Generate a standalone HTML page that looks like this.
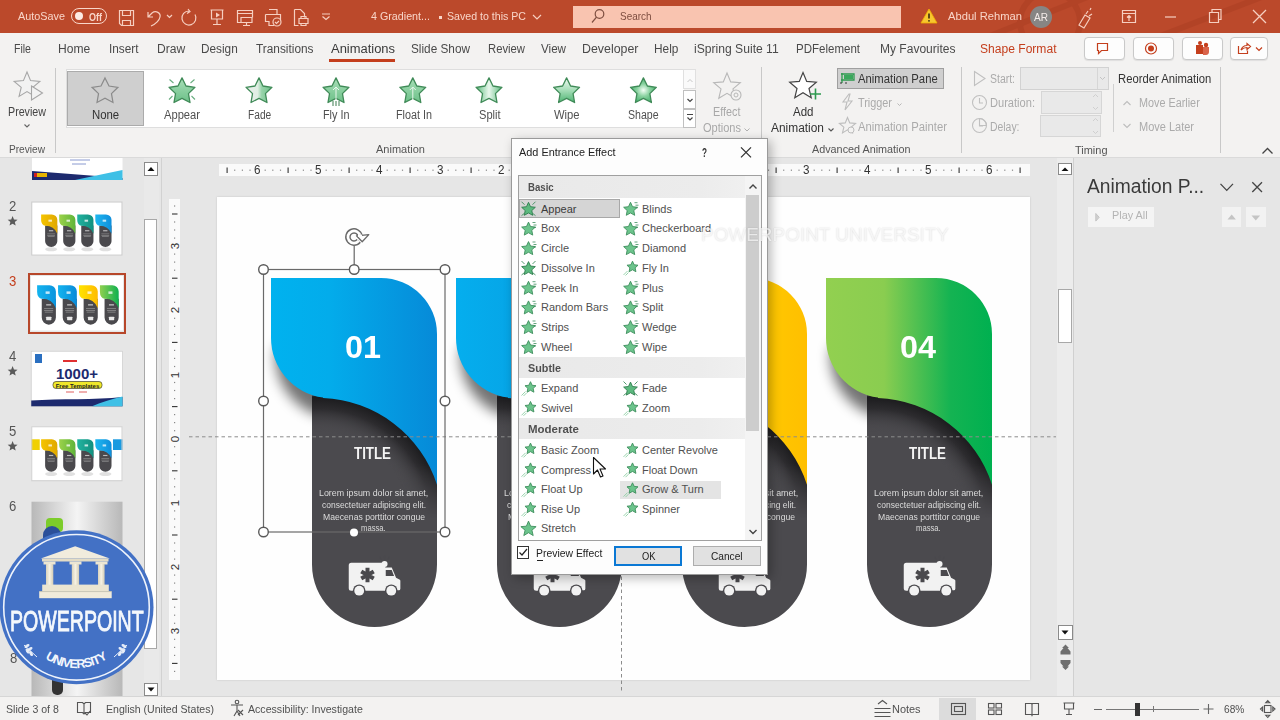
<!DOCTYPE html>
<html><head><meta charset="utf-8">
<style>
*{margin:0;padding:0;box-sizing:border-box}
html,body{width:1280px;height:720px;overflow:hidden;background:#e6e6e6;font-family:"Liberation Sans",sans-serif;color:#333;position:relative}
.a{position:absolute}
.t{position:absolute;white-space:pre;transform-origin:0 0}
svg{overflow:visible}
</style></head><body>
<div class="a" style="left:0px;top:0px;width:1280px;height:33px;background:#bb492b"></div>
<div class="a" style="left:0px;top:33px;width:1280px;height:125px;background:#f3f2f1"></div>
<div class="a" style="left:0px;top:157px;width:1280px;height:1px;background:#dadada"></div>
<div class="a" style="left:0px;top:158px;width:1280px;height:540px;background:#e6e6e6"></div>
<div class="a" style="left:0px;top:696px;width:1280px;height:24px;background:#f3f2f1;border-top:1px solid #d6d6d6"></div>
<svg class="a" style="left:0px;top:0px;overflow:hidden" width="1280" height="33" viewBox="0 0 1280 33"><g fill="none" stroke="#a83c22" stroke-width="6" opacity="0.45"><circle cx="1050" cy="22" r="30"/><path d="M980 40 L1130 -20"/><path d="M1150 40 L1280 -10"/></g></svg>
<div class="t" style="left:18.00px;top:11.22px;font-family:'Liberation Sans';font-size:11.5px;line-height:11.5px;color:#f9d6c9;font-weight:normal;transform:scaleX(0.9424);">AutoSave</div>
<div class="a" style="left:71px;top:8px;width:36px;height:16px;border:1.3px solid #f9d6c9;border-radius:8px"></div>
<div class="a" style="left:74.5px;top:12px;width:8px;height:8px;border-radius:50%;background:#fdebe4"></div>
<div class="t" style="left:88.50px;top:11.65px;font-family:'Liberation Sans';font-size:11px;line-height:11px;color:#f9d6c9;font-weight:bold;transform:scaleX(0.8181);">Off</div>
<svg class="a" style="left:0px;top:0px;" width="560" height="33" viewBox="0 0 560 33"><g fill="none" stroke="#f6cfc1" stroke-width="1.2">
  <path d="M119.5 10.5 h14 v15 h-12 l-2 -2 z M122.5 10.5 v5 h8 v-5 M122.5 25.5 v-5 h8 v5"/>
  <path d="M148 12 v5 h5 M148 17 l4 -4 c4 -3 9 0 8 4 c-0.5 3 -4 7 -9 9"/>
  <path d="M167 15 l2.5 2.5 l2.5 -2.5"/>
  <path d="M189 11 a7 7 0 1 0 6 3.5 M188 9 l2 2.5 l-3 2"/>
  <path d="M210.5 10 h13 M211.5 10 v9 h11 v-9 M217 19 v5 M213 24.5 h8"/><path d="M216 12.5 l4 2.5 l-4 2.5z" fill="#f6cfc1" stroke="none"/>
  <path d="M237.5 10.5 h15 v3 h-15 z M237.5 13.5 v9 h7 M252.5 13.5 v4 M241 17.5 h11 v5 h-11 z M246.5 22.5 v2.5 M243 25.5 h7"/>
  <path d="M269 9.5 h8 v5 M265.5 14.5 h15 v6 M265.5 14.5 v7 h3 M269 21 v4.5 h5"/><circle cx="277" cy="22" r="4"/><path d="M275 22 l1.5 1.5 l2.5 -2.5"/>
  <path d="M294.5 9.5 h6 l4 4 v4 M294.5 9.5 v16 h4 M299 18.5 h9 v5 h-9 z M301 18.5 v-2 h5 v2 M301 23.5 v2 h5 v-2"/>
  <path d="M322 14 h8 M322.5 16.5 l3.5 3 l3.5 -3"/>
  <path d="M533 15 l4 4 l4 -4"/>
 </g></svg>
<div class="t" style="left:371.00px;top:11.22px;font-family:'Liberation Sans';font-size:11.5px;line-height:11.5px;color:#f9d6c9;font-weight:normal;transform:scaleX(0.9321);">4 Gradient...</div>
<div class="a" style="left:439px;top:15.5px;width:3px;height:3px;background:#f9d6c9"></div>
<div class="t" style="left:447.00px;top:11.22px;font-family:'Liberation Sans';font-size:11.5px;line-height:11.5px;color:#f9d6c9;font-weight:normal;transform:scaleX(0.9223);">Saved to this PC</div>
<div class="a" style="left:573px;top:6px;width:328px;height:21.5px;background:#f9c4b0"></div>
<svg class="a" style="left:588px;top:7px;" width="22" height="20" viewBox="0 0 22 20"><g fill="none" stroke="#7e4e40" stroke-width="1.2"><circle cx="11.5" cy="7" r="4.3"/><path d="M8.5 10.2 L4 15.5"/></g></svg>
<div class="t" style="left:620.00px;top:11.22px;font-family:'Liberation Sans';font-size:11.5px;line-height:11.5px;color:#7e4e40;font-weight:normal;transform:scaleX(0.8645);">Search</div>
<svg class="a" style="left:920px;top:8px;" width="18" height="16" viewBox="0 0 18 16"><path d="M9 1 L17 15 H1 Z" fill="#f7c62f" stroke="#f0b000" stroke-width="0.8"/><path d="M9 5.5 v5" stroke="#3a2a10" stroke-width="1.6"/><circle cx="9" cy="12.8" r="0.9" fill="#3a2a10"/></svg>
<div class="t" style="left:948.00px;top:11.22px;font-family:'Liberation Sans';font-size:11.5px;line-height:11.5px;color:#f9d6c9;font-weight:normal;transform:scaleX(0.9727);">Abdul Rehman</div>
<div class="a" style="left:1030px;top:6px;width:22px;height:22px;border-radius:50%;background:#878584"></div>
<div class="t" style="left:1034.00px;top:12.08px;font-family:'Liberation Sans';font-size:10.5px;line-height:10.5px;color:#f4ecea;font-weight:normal;transform:scaleX(0.9593);">AR</div>
<svg class="a" style="left:1060px;top:0px;" width="220" height="33" viewBox="1060 0 220 33"><g fill="none" stroke="#f6cfc1" stroke-width="1.2">
  <path d="M1079 25 l6 -10 l5 3 l-6 10 z M1086 14 l2 -3 M1089 16 l3 -2 M1090 10 l1 -2"/>
  <path d="M1122.5 10.5 h13 v12 h-13 z M1122.5 13.5 h13 M1129 21 v-5 M1127 17.5 l2 -2 l2 2"/>
  <path d="M1165 17 h11"/>
  <path d="M1209.5 12.5 h9 v10 h-9 z M1212 12 v-2.5 h9 v10 h-2.5"/>
  <path d="M1253 10 l13 13 M1266 10 l-13 13" stroke-width="1.3"/>
 </g></svg>
<div class="t" style="left:14.30px;top:42.77px;font-family:'Liberation Sans';font-size:12.5px;line-height:12.5px;color:#4a4a4a;font-weight:normal;transform:scaleX(0.8434);">File</div>
<div class="t" style="left:58.30px;top:42.77px;font-family:'Liberation Sans';font-size:12.5px;line-height:12.5px;color:#4a4a4a;font-weight:normal;transform:scaleX(0.9657);">Home</div>
<div class="t" style="left:109.30px;top:42.77px;font-family:'Liberation Sans';font-size:12.5px;line-height:12.5px;color:#4a4a4a;font-weight:normal;transform:scaleX(0.9435);">Insert</div>
<div class="t" style="left:156.80px;top:42.77px;font-family:'Liberation Sans';font-size:12.5px;line-height:12.5px;color:#4a4a4a;font-weight:normal;transform:scaleX(0.9667);">Draw</div>
<div class="t" style="left:201.30px;top:42.77px;font-family:'Liberation Sans';font-size:12.5px;line-height:12.5px;color:#4a4a4a;font-weight:normal;transform:scaleX(0.9429);">Design</div>
<div class="t" style="left:255.50px;top:42.77px;font-family:'Liberation Sans';font-size:12.5px;line-height:12.5px;color:#4a4a4a;font-weight:normal;transform:scaleX(0.9477);">Transitions</div>
<div class="t" style="left:330.60px;top:42.77px;font-family:'Liberation Sans';font-size:12.5px;line-height:12.5px;color:#3a3a3a;font-weight:normal;transform:scaleX(1.0349);">Animations</div>
<div class="t" style="left:411.00px;top:42.77px;font-family:'Liberation Sans';font-size:12.5px;line-height:12.5px;color:#4a4a4a;font-weight:normal;transform:scaleX(0.9433);">Slide Show</div>
<div class="t" style="left:487.50px;top:42.77px;font-family:'Liberation Sans';font-size:12.5px;line-height:12.5px;color:#4a4a4a;font-weight:normal;transform:scaleX(0.9024);">Review</div>
<div class="t" style="left:540.50px;top:42.77px;font-family:'Liberation Sans';font-size:12.5px;line-height:12.5px;color:#4a4a4a;font-weight:normal;transform:scaleX(0.9302);">View</div>
<div class="t" style="left:581.50px;top:42.77px;font-family:'Liberation Sans';font-size:12.5px;line-height:12.5px;color:#4a4a4a;font-weight:normal;transform:scaleX(0.9915);">Developer</div>
<div class="t" style="left:654.40px;top:42.77px;font-family:'Liberation Sans';font-size:12.5px;line-height:12.5px;color:#4a4a4a;font-weight:normal;transform:scaleX(0.9487);">Help</div>
<div class="t" style="left:694.30px;top:42.77px;font-family:'Liberation Sans';font-size:12.5px;line-height:12.5px;color:#4a4a4a;font-weight:normal;transform:scaleX(0.9699);">iSpring Suite 11</div>
<div class="t" style="left:796.00px;top:42.77px;font-family:'Liberation Sans';font-size:12.5px;line-height:12.5px;color:#4a4a4a;font-weight:normal;transform:scaleX(0.9211);">PDFelement</div>
<div class="t" style="left:880.00px;top:42.77px;font-family:'Liberation Sans';font-size:12.5px;line-height:12.5px;color:#4a4a4a;font-weight:normal;transform:scaleX(0.9618);">My Favourites</div>
<div class="t" style="left:980.00px;top:42.77px;font-family:'Liberation Sans';font-size:12.5px;line-height:12.5px;color:#c43e1c;font-weight:normal;transform:scaleX(0.9657);">Shape Format</div>
<div class="a" style="left:329px;top:59px;width:66px;height:2.5px;background:#c43e1c"></div>
<div class="a" style="left:1084.4px;top:37.4px;width:40.19999999999982px;height:22.4px;background:#fdfdfd;border:1px solid #c9c9c9;border-radius:4px;box-shadow:0 1px 1px rgba(0,0,0,0.08)"></div>
<div class="a" style="left:1133px;top:37.4px;width:40.59999999999991px;height:22.4px;background:#fdfdfd;border:1px solid #c9c9c9;border-radius:4px;box-shadow:0 1px 1px rgba(0,0,0,0.08)"></div>
<div class="a" style="left:1181.5px;top:37.4px;width:41.0px;height:22.4px;background:#fdfdfd;border:1px solid #c9c9c9;border-radius:4px;box-shadow:0 1px 1px rgba(0,0,0,0.08)"></div>
<div class="a" style="left:1230.3px;top:37.4px;width:38.100000000000136px;height:22.4px;background:#fdfdfd;border:1px solid #c9c9c9;border-radius:4px;box-shadow:0 1px 1px rgba(0,0,0,0.08)"></div>
<svg class="a" style="left:1080px;top:30px;" width="200" height="40" viewBox="1080 30 200 40"><g fill="none" stroke="#c43e1c" stroke-width="1.2">
<path d="M1097.5 43.5 h10 v7 h-6 l-3 3 v-3 h-1 z"/>
<circle cx="1151" cy="48.5" r="5.5"/>
<path d="M1256 47.5 l3 3 l3 -3"/>
<path d="M1238.5 46 v7.5 h9 v-3 M1241 50 c1 -3 3 -4.5 6 -4.5 v-2 l3.5 3 l-3.5 3 v-2 c-2 0 -4 0.5 -6 2.5z"/>
</g>
<circle cx="1151" cy="48.5" r="3" fill="#c43e1c"/>
<path d="M1196 45 h7 v9 h-7 z" fill="#c43e1c"/><circle cx="1206" cy="45" r="2.2" fill="#c43e1c"/><path d="M1203 47 h6 v5 c0 2 -1.5 3 -3 3 h-3z" fill="#d9634a"/><circle cx="1200" cy="43" r="2" fill="#c43e1c"/>
</svg>
<svg class="a" style="left:0px;top:60px;" width="60" height="50" viewBox="0 60 60 50"><path d="M27.00,72.00 L30.57,80.59 L39.84,81.33 L32.78,87.38 L34.94,96.42 L27.00,91.58 L19.06,96.42 L21.22,87.38 L14.16,81.33 L23.43,80.59 Z" fill="#f2f2f2" stroke="#a6a6a6" stroke-width="1.1"/><path d="M31.5 86 L42.5 93 L31.5 100 Z" fill="#f2f2f2" stroke="#a6a6a6" stroke-width="1.1"/></svg>
<div class="t" style="left:8.00px;top:105.50px;font-family:'Liberation Sans';font-size:12px;line-height:12px;color:#444;font-weight:normal;transform:scaleX(0.8902);">Preview</div>
<svg class="a" style="left:22px;top:122px;" width="10" height="8" viewBox="0 0 10 8"><path d="M2.5 2.5 l2.5 2.5 l2.5 -2.5" fill="none" stroke="#666" stroke-width="1.1"/></svg>
<div class="t" style="left:8.70px;top:144.22px;font-family:'Liberation Sans';font-size:11.5px;line-height:11.5px;color:#555;font-weight:normal;transform:scaleX(0.8801);">Preview</div>
<div class="a" style="left:55px;top:68px;width:1px;height:85px;background:#c8c8c8"></div>
<div class="a" style="left:65.5px;top:69px;width:618px;height:59px;background:#fff;border:1px solid #dedede;border-right:none"></div>
<div class="a" style="left:67px;top:71px;width:76.5px;height:55px;background:#cfcfcf;border:1px solid #ababab"></div>
<div class="t" style="left:92.20px;top:109.20px;font-family:'Liberation Sans';font-size:12px;line-height:12px;color:#333;font-weight:normal;transform:scaleX(0.9481);">None</div>
<div class="t" style="left:164.00px;top:109.20px;font-family:'Liberation Sans';font-size:12px;line-height:12px;color:#505050;font-weight:normal;transform:scaleX(0.9302);">Appear</div>
<div class="t" style="left:247.80px;top:109.20px;font-family:'Liberation Sans';font-size:12px;line-height:12px;color:#505050;font-weight:normal;transform:scaleX(0.8480);">Fade</div>
<div class="t" style="left:322.50px;top:109.20px;font-family:'Liberation Sans';font-size:12px;line-height:12px;color:#505050;font-weight:normal;transform:scaleX(0.9031);">Fly In</div>
<div class="t" style="left:395.60px;top:109.20px;font-family:'Liberation Sans';font-size:12px;line-height:12px;color:#505050;font-weight:normal;transform:scaleX(0.8993);">Float In</div>
<div class="t" style="left:479.40px;top:109.20px;font-family:'Liberation Sans';font-size:12px;line-height:12px;color:#505050;font-weight:normal;transform:scaleX(0.9253);">Split</div>
<div class="t" style="left:554.40px;top:109.20px;font-family:'Liberation Sans';font-size:12px;line-height:12px;color:#505050;font-weight:normal;transform:scaleX(0.9362);">Wipe</div>
<div class="t" style="left:628.40px;top:109.20px;font-family:'Liberation Sans';font-size:12px;line-height:12px;color:#505050;font-weight:normal;transform:scaleX(0.8818);">Shape</div>
<svg class="a" style="left:0px;top:0px;" width="700" height="130" viewBox="0 0 700 130"><defs>
<linearGradient id="gs" x1="0" y1="0" x2="0" y2="1"><stop offset="0" stop-color="#a9dfb8"/><stop offset="1" stop-color="#6cc088"/></linearGradient>
<linearGradient id="gfade" x1="0" y1="0" x2="1" y2="0"><stop offset="0" stop-color="#ececec"/><stop offset="0.45" stop-color="#dfeee3"/><stop offset="0.6" stop-color="#98d4aa"/><stop offset="1" stop-color="#6cc088"/></linearGradient>
<linearGradient id="gsplit" x1="0" y1="0" x2="1" y2="0"><stop offset="0" stop-color="#5dbb7e"/><stop offset="0.5" stop-color="#e8f7ec"/><stop offset="1" stop-color="#5dbb7e"/></linearGradient>
<linearGradient id="gwipe" x1="0" y1="0" x2="0" y2="1"><stop offset="0" stop-color="#f0faf3"/><stop offset="0.5" stop-color="#a5ddb7"/><stop offset="1" stop-color="#4fb574"/></linearGradient>
<radialGradient id="gshape"><stop offset="0" stop-color="#f4fff6"/><stop offset="0.5" stop-color="#8ad2a0"/><stop offset="1" stop-color="#4fb574"/></radialGradient>
</defs><path d="M105.00,77.90 L109.00,86.00 L117.93,87.30 L111.47,93.60 L112.99,102.50 L105.00,98.30 L97.01,102.50 L98.53,93.60 L92.07,87.30 L101.00,86.00 Z" fill="#cdcdcd" stroke="#8a8a8a" stroke-width="1.2"/><path d="M182.00,77.90 L186.00,86.00 L194.93,87.30 L188.47,93.60 L189.99,102.50 L182.00,98.30 L174.01,102.50 L175.53,93.60 L169.07,87.30 L178.00,86.00 Z" fill="url(#gs)" stroke="#3f8a57" stroke-width="1.3" stroke-linejoin="round"/><g stroke="#6aae80" stroke-width="1.1"><path d="M169.5 79.5 l4 3.5 M194.5 79.5 l-4 3.5 M169 99.5 l3.5 -3.5 M195 99.5 l-3.5 -3.5"/></g><path d="M259.00,77.90 L263.00,86.00 L271.93,87.30 L265.47,93.60 L266.99,102.50 L259.00,98.30 L251.01,102.50 L252.53,93.60 L246.07,87.30 L255.00,86.00 Z" fill="url(#gfade)" stroke="#3f8a57" stroke-width="1.3" stroke-linejoin="round"/><path d="M336.00,77.90 L340.00,86.00 L348.93,87.30 L342.47,93.60 L343.99,102.50 L336.00,98.30 L328.01,102.50 L329.53,93.60 L323.07,87.30 L332.00,86.00 Z" fill="url(#gs)" stroke="#3f8a57" stroke-width="1.3" stroke-linejoin="round"/><path d="M336 100 v-13 M333 90 l3 -3 l3 3" stroke="#e8f7ec" stroke-width="1" fill="none"/><path d="M333 101 v5 M336 101 v5 M339 101 v5" stroke="#3c7d50" stroke-width="1"/><path d="M412.80,77.90 L416.80,86.00 L425.73,87.30 L419.27,93.60 L420.79,102.50 L412.80,98.30 L404.81,102.50 L406.33,93.60 L399.87,87.30 L408.80,86.00 Z" fill="url(#gs)" stroke="#3f8a57" stroke-width="1.3" stroke-linejoin="round"/><path d="M412.8 100 v-13 M409.8 90 l3 -3 l3 3" stroke="#e8f7ec" stroke-width="1" fill="none"/><path d="M489.00,77.90 L493.00,86.00 L501.93,87.30 L495.47,93.60 L496.99,102.50 L489.00,98.30 L481.01,102.50 L482.53,93.60 L476.07,87.30 L485.00,86.00 Z" fill="url(#gsplit)" stroke="#3f8a57" stroke-width="1.3" stroke-linejoin="round"/><path d="M566.60,77.90 L570.60,86.00 L579.53,87.30 L573.07,93.60 L574.59,102.50 L566.60,98.30 L558.61,102.50 L560.13,93.60 L553.67,87.30 L562.60,86.00 Z" fill="url(#gwipe)" stroke="#3f8a57" stroke-width="1.3" stroke-linejoin="round"/><path d="M643.40,77.90 L647.40,86.00 L656.33,87.30 L649.87,93.60 L651.39,102.50 L643.40,98.30 L635.41,102.50 L636.93,93.60 L630.47,87.30 L639.40,86.00 Z" fill="url(#gshape)" stroke="#3f8a57" stroke-width="1.3" stroke-linejoin="round"/></svg>
<div class="a" style="left:683.4px;top:69px;width:13px;height:20px;background:#fafafa;border:1px solid #e0e0e0"></div>
<div class="a" style="left:683.4px;top:90px;width:13px;height:18.5px;background:#fff;border:1px solid #c0c0c0"></div>
<div class="a" style="left:683.4px;top:109px;width:13px;height:19px;background:#fff;border:1px solid #c0c0c0"></div>
<svg class="a" style="left:683px;top:69px;" width="14" height="60" viewBox="0 0 14 60"><path d="M4.5 13 l2.5 -2.5 l2.5 2.5" fill="none" stroke="#c8c8c8" stroke-width="1"/><path d="M4.5 30 l2.5 2.5 l2.5 -2.5" fill="none" stroke="#444" stroke-width="1.2"/><path d="M4 45.5 h6 M4.5 48.5 l2.5 2.5 l2.5 -2.5" fill="none" stroke="#444" stroke-width="1.2"/></svg>
<svg class="a" style="left:700px;top:65px;" width="60" height="40" viewBox="700 65 60 40"><path d="M727.00,73.00 L730.70,81.90 L740.31,82.67 L732.99,88.95 L735.23,98.33 L727.00,93.30 L718.77,98.33 L721.01,88.95 L713.69,82.67 L723.30,81.90 Z" fill="none" stroke="#b8b8b8" stroke-width="1.1"/><circle cx="736" cy="95" r="5" fill="#f3f2f1" stroke="#b8b8b8" stroke-width="1.1"/><circle cx="736" cy="95" r="2" fill="none" stroke="#b8b8b8" stroke-width="1"/></svg>
<div class="t" style="left:713.40px;top:105.80px;font-family:'Liberation Sans';font-size:12px;line-height:12px;color:#a8a8a8;font-weight:normal;transform:scaleX(0.8993);">Effect</div>
<div class="t" style="left:702.70px;top:121.80px;font-family:'Liberation Sans';font-size:12px;line-height:12px;color:#a8a8a8;font-weight:normal;transform:scaleX(0.9188);">Options</div>
<svg class="a" style="left:742px;top:126px;" width="10" height="8" viewBox="0 0 10 8"><path d="M2.5 2.5 l2.5 2.5 l2.5 -2.5" fill="none" stroke="#b0b0b0" stroke-width="1"/></svg>
<div class="t" style="left:376.00px;top:144.22px;font-family:'Liberation Sans';font-size:11.5px;line-height:11.5px;color:#555;font-weight:normal;transform:scaleX(0.9581);">Animation</div>
<div class="a" style="left:761px;top:67px;width:1px;height:86px;background:#c8c8c8"></div>
<svg class="a" style="left:770px;top:65px;" width="70" height="40" viewBox="770 65 70 40"><path d="M803.00,72.50 L806.70,81.40 L816.31,82.17 L808.99,88.45 L811.23,97.83 L803.00,92.80 L794.77,97.83 L797.01,88.45 L789.69,82.17 L799.30,81.40 Z" fill="#fff" stroke="#444" stroke-width="1.2"/><path d="M810 94 h11 M815.5 88.5 v11" stroke="#2e9a4f" stroke-width="1.6"/></svg>
<div class="t" style="left:793.00px;top:105.80px;font-family:'Liberation Sans';font-size:12px;line-height:12px;color:#333;font-weight:normal;transform:scaleX(0.9598);">Add</div>
<div class="t" style="left:771.30px;top:121.80px;font-family:'Liberation Sans';font-size:12px;line-height:12px;color:#333;font-weight:normal;transform:scaleX(0.9930);">Animation</div>
<svg class="a" style="left:826px;top:126px;" width="10" height="8" viewBox="0 0 10 8"><path d="M2.5 2.5 l2.5 2.5 l2.5 -2.5" fill="none" stroke="#555" stroke-width="1.1"/></svg>
<div class="a" style="left:837px;top:67.5px;width:106.6px;height:21.8px;background:#cfcfcf;border:1px solid #9f9f9f"></div>
<svg class="a" style="left:838px;top:70px;" width="20" height="16" viewBox="0 0 20 16"><path d="M4 3 v10 M3 4 h13 v6 h-13" fill="none" stroke="#2e9a4f" stroke-width="1.3"/><path d="M6 5 h9 v4 h-9z" fill="#3aa85c"/><path d="M2 13 h2 M7 13 h2" stroke="#333" stroke-width="1"/></svg>
<div class="t" style="left:858.00px;top:73.00px;font-family:'Liberation Sans';font-size:12px;line-height:12px;color:#333;font-weight:normal;transform:scaleX(0.9406);">Animation Pane</div>
<svg class="a" style="left:838px;top:92px;" width="20" height="20" viewBox="0 0 20 20"><path d="M11 2 L5 10 h4 l-2 8 l7 -9 h-4 l2 -7z" fill="none" stroke="#bdbdbd" stroke-width="1.1"/></svg>
<div class="t" style="left:858.00px;top:97.20px;font-family:'Liberation Sans';font-size:12px;line-height:12px;color:#ababab;font-weight:normal;transform:scaleX(0.9048);">Trigger</div>
<svg class="a" style="left:895px;top:101px;" width="10" height="8" viewBox="0 0 10 8"><path d="M2.5 2.5 l2 2 l2 -2" fill="none" stroke="#b8b8b8" stroke-width="1"/></svg>
<svg class="a" style="left:838px;top:116px;" width="20" height="20" viewBox="0 0 20 20"><path d="M9.50,1.50 L11.75,6.91 L17.58,7.37 L13.14,11.18 L14.50,16.88 L9.50,13.82 L4.50,16.88 L5.86,11.18 L1.42,7.37 L7.25,6.91 Z" fill="none" stroke="#bdbdbd" stroke-width="1.1"/><circle cx="13" cy="14" r="3" fill="#f3f2f1" stroke="#bdbdbd"/></svg>
<div class="t" style="left:858.00px;top:120.60px;font-family:'Liberation Sans';font-size:12px;line-height:12px;color:#ababab;font-weight:normal;transform:scaleX(0.9396);">Animation Painter</div>
<div class="t" style="left:812.30px;top:144.42px;font-family:'Liberation Sans';font-size:11.5px;line-height:11.5px;color:#555;font-weight:normal;transform:scaleX(0.9394);">Advanced Animation</div>
<div class="a" style="left:961px;top:67px;width:1px;height:86px;background:#c8c8c8"></div>
<svg class="a" style="left:970px;top:68px;" width="20" height="70" viewBox="0 0 20 70"><g fill="none" stroke="#c0c0c0" stroke-width="1.1"><path d="M4.5 3.5 L15 10.5 L4.5 17.5 Z"/><circle cx="9.5" cy="34.5" r="7"/><path d="M9.5 30 v5 h3.5"/><circle cx="9.5" cy="57.5" r="7"/><path d="M9.5 53 v5 h3.5 M9.5 50.5 a7 7 0 0 1 7 7 h-7z"/></g></svg>
<div class="t" style="left:990.00px;top:73.30px;font-family:'Liberation Sans';font-size:12px;line-height:12px;color:#ababab;font-weight:normal;transform:scaleX(0.8715);">Start:</div>
<div class="a" style="left:1020px;top:67px;width:88.8px;height:22.5px;background:#e9e9e9;border:1px solid #d2d2d2"></div>
<div class="a" style="left:1096.5px;top:68px;width:1px;height:20.5px;background:#d6d6d6"></div>
<svg class="a" style="left:1098px;top:75px;" width="10" height="8" viewBox="0 0 10 8"><path d="M2 2 l2.5 2.5 l2.5 -2.5" fill="none" stroke="#c4c4c4" stroke-width="1"/></svg>
<div class="t" style="left:990.00px;top:96.80px;font-family:'Liberation Sans';font-size:12px;line-height:12px;color:#ababab;font-weight:normal;transform:scaleX(0.9240);">Duration:</div>
<div class="a" style="left:1040.5px;top:91px;width:61.5px;height:22.5px;background:#e9e9e9;border:1px solid #d6d6d6"></div>
<div class="t" style="left:990.00px;top:120.80px;font-family:'Liberation Sans';font-size:12px;line-height:12px;color:#ababab;font-weight:normal;transform:scaleX(0.8672);">Delay:</div>
<div class="a" style="left:1040px;top:115.2px;width:60.5px;height:21.8px;background:#e9e9e9;border:1px solid #d6d6d6"></div>
<svg class="a" style="left:1090px;top:90px;" width="14" height="50" viewBox="0 0 14 50"><g fill="none" stroke="#cfcfcf" stroke-width="1"><path d="M3 7 l2.5 -2.5 l2.5 2.5 M3 17 l2.5 2.5 l2.5 -2.5 M3 31 l2.5 -2.5 l2.5 2.5 M3 41 l2.5 2.5 l2.5 -2.5"/></g></svg>
<div class="a" style="left:1113px;top:84px;width:1px;height:47.5px;background:#d0d0d0"></div>
<div class="t" style="left:1118.00px;top:73.30px;font-family:'Liberation Sans';font-size:12px;line-height:12px;color:#333;font-weight:normal;transform:scaleX(0.9382);">Reorder Animation</div>
<svg class="a" style="left:1120px;top:95px;" width="14" height="40" viewBox="0 0 14 40"><g fill="none" stroke="#bdbdbd" stroke-width="1.1"><path d="M3.5 10 l3.5 -3.5 l3.5 3.5 M3.5 29 l3.5 3.5 l3.5 -3.5"/></g></svg>
<div class="t" style="left:1138.75px;top:96.80px;font-family:'Liberation Sans';font-size:12px;line-height:12px;color:#ababab;font-weight:normal;transform:scaleX(0.9019);">Move Earlier</div>
<div class="t" style="left:1138.75px;top:120.80px;font-family:'Liberation Sans';font-size:12px;line-height:12px;color:#ababab;font-weight:normal;transform:scaleX(0.9162);">Move Later</div>
<div class="t" style="left:1074.50px;top:144.72px;font-family:'Liberation Sans';font-size:11.5px;line-height:11.5px;color:#555;font-weight:normal;transform:scaleX(0.9533);">Timing</div>
<div class="a" style="left:1220px;top:67px;width:1px;height:86px;background:#c8c8c8"></div>
<svg class="a" style="left:1260px;top:146px;" width="16" height="10" viewBox="0 0 16 10"><path d="M2.5 7.5 l5 -5 l5 5" fill="none" stroke="#444" stroke-width="1.3"/></svg>
<div class="a" style="left:161px;top:158px;width:1px;height:538px;background:#d2d2d2"></div>
<div class="a" style="left:143.5px;top:158px;width:15px;height:538px;background:#e9e9e9"></div>
<div class="a" style="left:143.5px;top:161.5px;width:14px;height:14px;background:#fff;border:1px solid #8a8a8a"></div>
<svg class="a" style="left:143.5px;top:161.5px;" width="14" height="14" viewBox="0 0 14 14"><path d="M3.5 9 L7 5 L10.5 9 Z" fill="#111"/></svg>
<div class="a" style="left:144.4px;top:219px;width:13.1px;height:430px;background:#fff;border:1px solid #a8a8a8"></div>
<div class="a" style="left:144px;top:682.5px;width:13.5px;height:13px;background:#fff;border:1px solid #8a8a8a"></div>
<svg class="a" style="left:144px;top:682.5px;" width="14" height="13" viewBox="0 0 14 13"><path d="M3.5 4.5 L7 8.5 L10.5 4.5 Z" fill="#111"/></svg>
<div class="t" style="left:9.40px;top:198.90px;font-family:'Liberation Sans';font-size:14px;line-height:14px;color:#555;font-weight:normal;transform:scaleX(0.9363);">2</div>
<svg class="a" style="left:0px;top:0px;" width="30" height="700" viewBox="0 0 30 700"><path d="M12.60,216.10 L13.98,219.41 L17.55,219.69 L14.83,222.02 L15.66,225.51 L12.60,223.64 L9.54,225.51 L10.37,222.02 L7.65,219.69 L11.22,219.41 Z" fill="#5a5a5a"/></svg>
<svg class="a" style="left:0px;top:0px;" width="160" height="700" viewBox="0 0 160 700"><defs><clipPath id="thc201"><rect x="0" y="0" width="813" height="483"/></clipPath></defs><g transform="translate(31.25,201.5) scale(0.11224)" clip-path="url(#thc201)"><rect x="0" y="0" width="813" height="483" fill="#fff"/><g transform="translate(401.5,261) scale(0.87,0.83) translate(-414.5,-255.5)"><defs><linearGradient id="mg49995" x1="0" x2="1"><stop offset="0" stop-color="#f5c400"/><stop offset="1" stop-color="#e0a800"/></linearGradient></defs><g transform="translate(54,81)"><path d="M41 119 H166 V286.5 A62.5 62.5 0 0 1 41 286.5 Z" fill="#4a494d"/><path d="M0 0 H109 A57 57 0 0 1 166 57 V205 A122 122 0 0 0 41 120 A41 60 0 0 1 0 60 Z" fill="url(#mg49995)"/><rect x="75" y="55" width="36" height="22" fill="#ffffff" opacity="0.75"/><rect x="80" y="168" width="44" height="12" fill="#d8d8d8" opacity="0.8"/><rect x="62" y="205" width="80" height="6" fill="#9a9a9a"/><rect x="62" y="220" width="80" height="6" fill="#9a9a9a"/><rect x="68" y="235" width="70" height="6" fill="#9a9a9a"/><ellipse cx="103" cy="372" rx="62" ry="22" fill="#d8d8d8" opacity="0.8"/></g><defs><linearGradient id="mg3196" x1="0" x2="1"><stop offset="0" stop-color="#9bd24a"/><stop offset="1" stop-color="#5fb43a"/></linearGradient></defs><g transform="translate(239,81)"><path d="M41 119 H166 V286.5 A62.5 62.5 0 0 1 41 286.5 Z" fill="#4a494d"/><path d="M0 0 H109 A57 57 0 0 1 166 57 V205 A122 122 0 0 0 41 120 A41 60 0 0 1 0 60 Z" fill="url(#mg3196)"/><rect x="75" y="55" width="36" height="22" fill="#ffffff" opacity="0.75"/><rect x="80" y="168" width="44" height="12" fill="#d8d8d8" opacity="0.8"/><rect x="62" y="205" width="80" height="6" fill="#9a9a9a"/><rect x="62" y="220" width="80" height="6" fill="#9a9a9a"/><rect x="68" y="235" width="70" height="6" fill="#9a9a9a"/><ellipse cx="103" cy="372" rx="62" ry="22" fill="#d8d8d8" opacity="0.8"/></g><defs><linearGradient id="mg83926" x1="0" x2="1"><stop offset="0" stop-color="#22b3a0"/><stop offset="1" stop-color="#12907f"/></linearGradient></defs><g transform="translate(424,81)"><path d="M41 119 H166 V286.5 A62.5 62.5 0 0 1 41 286.5 Z" fill="#4a494d"/><path d="M0 0 H109 A57 57 0 0 1 166 57 V205 A122 122 0 0 0 41 120 A41 60 0 0 1 0 60 Z" fill="url(#mg83926)"/><rect x="75" y="55" width="36" height="22" fill="#ffffff" opacity="0.75"/><rect x="80" y="168" width="44" height="12" fill="#d8d8d8" opacity="0.8"/><rect x="62" y="205" width="80" height="6" fill="#9a9a9a"/><rect x="62" y="220" width="80" height="6" fill="#9a9a9a"/><rect x="68" y="235" width="70" height="6" fill="#9a9a9a"/><ellipse cx="103" cy="372" rx="62" ry="22" fill="#d8d8d8" opacity="0.8"/></g><defs><linearGradient id="mg69265" x1="0" x2="1"><stop offset="0" stop-color="#1fb7ef"/><stop offset="1" stop-color="#0f8fdc"/></linearGradient></defs><g transform="translate(609,81)"><path d="M41 119 H166 V286.5 A62.5 62.5 0 0 1 41 286.5 Z" fill="#4a494d"/><path d="M0 0 H109 A57 57 0 0 1 166 57 V205 A122 122 0 0 0 41 120 A41 60 0 0 1 0 60 Z" fill="url(#mg69265)"/><rect x="75" y="55" width="36" height="22" fill="#ffffff" opacity="0.75"/><rect x="80" y="168" width="44" height="12" fill="#d8d8d8" opacity="0.8"/><rect x="62" y="205" width="80" height="6" fill="#9a9a9a"/><rect x="62" y="220" width="80" height="6" fill="#9a9a9a"/><rect x="68" y="235" width="70" height="6" fill="#9a9a9a"/><ellipse cx="103" cy="372" rx="62" ry="22" fill="#d8d8d8" opacity="0.8"/></g></g></g><rect x="31.75" y="202" width="90.25" height="53.1" fill="none" stroke="#c8c8c8" stroke-width="1"/></svg>
<div class="t" style="left:9.40px;top:274.10px;font-family:'Liberation Sans';font-size:14px;line-height:14px;color:#c43e1c;font-weight:normal;transform:scaleX(0.9363);">3</div>
<div class="a" style="left:28px;top:273px;width:98px;height:60.75px;border:2.6px solid #b7472a"></div>
<svg class="a" style="left:0px;top:0px;" width="160" height="700" viewBox="0 0 160 700"><defs><clipPath id="thc276"><rect x="0" y="0" width="813" height="483"/></clipPath></defs><g transform="translate(31,276) scale(0.11316)" clip-path="url(#thc276)"><rect x="0" y="0" width="813" height="483" fill="#fff"/><g transform=""><defs><linearGradient id="mg61237" x1="0" x2="1"><stop offset="0" stop-color="#14b4ef"/><stop offset="1" stop-color="#0a94de"/></linearGradient></defs><g transform="translate(54,81)"><path d="M41 119 H166 V286.5 A62.5 62.5 0 0 1 41 286.5 Z" fill="#4a494d"/><path d="M0 0 H109 A57 57 0 0 1 166 57 V205 A122 122 0 0 0 41 120 A41 60 0 0 1 0 60 Z" fill="url(#mg61237)"/><rect x="80" y="280" width="46" height="30" rx="4" fill="#e8e8e8"/><rect x="75" y="55" width="36" height="22" fill="#ffffff" opacity="0.75"/><rect x="80" y="168" width="44" height="12" fill="#d8d8d8" opacity="0.8"/><rect x="62" y="205" width="80" height="6" fill="#9a9a9a"/><rect x="62" y="220" width="80" height="6" fill="#9a9a9a"/><rect x="68" y="235" width="70" height="6" fill="#9a9a9a"/></g><defs><linearGradient id="mg91954" x1="0" x2="1"><stop offset="0" stop-color="#14b4ef"/><stop offset="1" stop-color="#0a8ad8"/></linearGradient></defs><g transform="translate(239,81)"><path d="M41 119 H166 V286.5 A62.5 62.5 0 0 1 41 286.5 Z" fill="#4a494d"/><path d="M0 0 H109 A57 57 0 0 1 166 57 V205 A122 122 0 0 0 41 120 A41 60 0 0 1 0 60 Z" fill="url(#mg91954)"/><rect x="80" y="280" width="46" height="30" rx="4" fill="#e8e8e8"/><rect x="75" y="55" width="36" height="22" fill="#ffffff" opacity="0.75"/><rect x="80" y="168" width="44" height="12" fill="#d8d8d8" opacity="0.8"/><rect x="62" y="205" width="80" height="6" fill="#9a9a9a"/><rect x="62" y="220" width="80" height="6" fill="#9a9a9a"/><rect x="68" y="235" width="70" height="6" fill="#9a9a9a"/></g><defs><linearGradient id="mg63296" x1="0" x2="1"><stop offset="0" stop-color="#ffe400"/><stop offset="1" stop-color="#ffbb00"/></linearGradient></defs><g transform="translate(424,81)"><path d="M41 119 H166 V286.5 A62.5 62.5 0 0 1 41 286.5 Z" fill="#4a494d"/><path d="M0 0 H109 A57 57 0 0 1 166 57 V205 A122 122 0 0 0 41 120 A41 60 0 0 1 0 60 Z" fill="url(#mg63296)"/><rect x="80" y="280" width="46" height="30" rx="4" fill="#e8e8e8"/><rect x="75" y="55" width="36" height="22" fill="#ffffff" opacity="0.75"/><rect x="80" y="168" width="44" height="12" fill="#d8d8d8" opacity="0.8"/><rect x="62" y="205" width="80" height="6" fill="#9a9a9a"/><rect x="62" y="220" width="80" height="6" fill="#9a9a9a"/><rect x="68" y="235" width="70" height="6" fill="#9a9a9a"/></g><defs><linearGradient id="mg89895" x1="0" x2="1"><stop offset="0" stop-color="#8fd050"/><stop offset="1" stop-color="#0fb050"/></linearGradient></defs><g transform="translate(609,81)"><path d="M41 119 H166 V286.5 A62.5 62.5 0 0 1 41 286.5 Z" fill="#4a494d"/><path d="M0 0 H109 A57 57 0 0 1 166 57 V205 A122 122 0 0 0 41 120 A41 60 0 0 1 0 60 Z" fill="url(#mg89895)"/><rect x="80" y="280" width="46" height="30" rx="4" fill="#e8e8e8"/><rect x="75" y="55" width="36" height="22" fill="#ffffff" opacity="0.75"/><rect x="80" y="168" width="44" height="12" fill="#d8d8d8" opacity="0.8"/><rect x="62" y="205" width="80" height="6" fill="#9a9a9a"/><rect x="62" y="220" width="80" height="6" fill="#9a9a9a"/><rect x="68" y="235" width="70" height="6" fill="#9a9a9a"/></g></g></g></svg>
<svg class="a" style="left:0px;top:158px;" width="160" height="30" viewBox="0 0 160 30"><rect x="32" y="0" width="90.5" height="22" fill="#fff"/><path d="M32 13 L122.5 20 V22 H32Z" fill="#1d2a6e"/><path d="M75 22 L122.5 12 V22Z" fill="#3fc0e6"/><rect x="34" y="15" width="13" height="4" fill="#e8b400"/><rect x="34" y="15" width="3" height="4" fill="#d02020"/><path d="M70 2 h20 M72 6 h14" stroke="#8a9ad0" stroke-width="1"/></svg>
<div class="t" style="left:9.40px;top:349.10px;font-family:'Liberation Sans';font-size:14px;line-height:14px;color:#555;font-weight:normal;transform:scaleX(0.9363);">4</div>
<svg class="a" style="left:0px;top:0px;" width="30" height="700" viewBox="0 0 30 700"><path d="M12.60,366.10 L13.98,369.41 L17.55,369.69 L14.83,372.02 L15.66,375.51 L12.60,373.64 L9.54,375.51 L10.37,372.02 L7.65,369.69 L11.22,369.41 Z" fill="#5a5a5a"/></svg>
<svg class="a" style="left:0px;top:340px;" width="160" height="80" viewBox="0 0 160 80"><rect x="31.25" y="11.25" width="91.25" height="55" fill="#fff" stroke="#d0d0d0" stroke-width="0.8"/>
<path d="M31.25 60.5 C60 58.5 95 60 122.5 57 V66.25 H31.25Z" fill="#1d2a6e"/><path d="M92 66.25 C102 62 112 59 122.5 56.5 V66.25Z" fill="#3fc0e6"/>
<rect x="35" y="14" width="7" height="9" fill="#2a6fc0"/><rect x="63" y="20" width="14" height="2" fill="#e03030"/>
<text x="77" y="39" font-family="Liberation Sans" font-weight="bold" font-size="15" fill="#1d2a6e" text-anchor="middle">1000+</text>
<rect x="53" y="41.5" width="49" height="7" rx="3" fill="#f0e82a" stroke="#222" stroke-width="0.6"/>
<text x="77.5" y="47.5" font-family="Liberation Sans" font-weight="bold" font-size="6" fill="#222" text-anchor="middle">Free Templates</text>
<path d="M66 52 h8 M79 52 h8" stroke="#e06060" stroke-width="1.2"/></svg>
<div class="t" style="left:9.40px;top:424.10px;font-family:'Liberation Sans';font-size:14px;line-height:14px;color:#555;font-weight:normal;transform:scaleX(0.9363);">5</div>
<svg class="a" style="left:0px;top:0px;" width="30" height="700" viewBox="0 0 30 700"><path d="M12.60,441.10 L13.98,444.41 L17.55,444.69 L14.83,447.02 L15.66,450.51 L12.60,448.64 L9.54,450.51 L10.37,447.02 L7.65,444.69 L11.22,444.41 Z" fill="#5a5a5a"/></svg>
<svg class="a" style="left:0px;top:0px;" width="160" height="700" viewBox="0 0 160 700"><defs><clipPath id="thc426"><rect x="0" y="0" width="813" height="483"/></clipPath></defs><g transform="translate(31.25,426.25) scale(0.11224)" clip-path="url(#thc426)"><rect x="0" y="0" width="813" height="483" fill="#fff"/><g transform="translate(401.5,261) scale(0.87,0.83) translate(-414.5,-255.5)"><rect x="-80" y="81" width="120" height="115" fill="#f0d000"/><rect x="790" y="81" width="120" height="115" fill="#1a9ae0"/><defs><linearGradient id="mg7564" x1="0" x2="1"><stop offset="0" stop-color="#f5c400"/><stop offset="1" stop-color="#e0a800"/></linearGradient></defs><g transform="translate(54,81)"><path d="M41 119 H166 V286.5 A62.5 62.5 0 0 1 41 286.5 Z" fill="#4a494d"/><path d="M0 0 H109 A57 57 0 0 1 166 57 V205 A122 122 0 0 0 41 120 A41 60 0 0 1 0 60 Z" fill="url(#mg7564)"/><rect x="75" y="55" width="36" height="22" fill="#ffffff" opacity="0.75"/><rect x="80" y="168" width="44" height="12" fill="#d8d8d8" opacity="0.8"/><rect x="62" y="205" width="80" height="6" fill="#9a9a9a"/><rect x="62" y="220" width="80" height="6" fill="#9a9a9a"/><rect x="68" y="235" width="70" height="6" fill="#9a9a9a"/><ellipse cx="103" cy="372" rx="62" ry="22" fill="#d8d8d8" opacity="0.8"/></g><defs><linearGradient id="mg9139" x1="0" x2="1"><stop offset="0" stop-color="#9bd24a"/><stop offset="1" stop-color="#5fb43a"/></linearGradient></defs><g transform="translate(239,81)"><path d="M41 119 H166 V286.5 A62.5 62.5 0 0 1 41 286.5 Z" fill="#4a494d"/><path d="M0 0 H109 A57 57 0 0 1 166 57 V205 A122 122 0 0 0 41 120 A41 60 0 0 1 0 60 Z" fill="url(#mg9139)"/><rect x="75" y="55" width="36" height="22" fill="#ffffff" opacity="0.75"/><rect x="80" y="168" width="44" height="12" fill="#d8d8d8" opacity="0.8"/><rect x="62" y="205" width="80" height="6" fill="#9a9a9a"/><rect x="62" y="220" width="80" height="6" fill="#9a9a9a"/><rect x="68" y="235" width="70" height="6" fill="#9a9a9a"/><ellipse cx="103" cy="372" rx="62" ry="22" fill="#d8d8d8" opacity="0.8"/></g><defs><linearGradient id="mg77983" x1="0" x2="1"><stop offset="0" stop-color="#22b3a0"/><stop offset="1" stop-color="#12907f"/></linearGradient></defs><g transform="translate(424,81)"><path d="M41 119 H166 V286.5 A62.5 62.5 0 0 1 41 286.5 Z" fill="#4a494d"/><path d="M0 0 H109 A57 57 0 0 1 166 57 V205 A122 122 0 0 0 41 120 A41 60 0 0 1 0 60 Z" fill="url(#mg77983)"/><rect x="75" y="55" width="36" height="22" fill="#ffffff" opacity="0.75"/><rect x="80" y="168" width="44" height="12" fill="#d8d8d8" opacity="0.8"/><rect x="62" y="205" width="80" height="6" fill="#9a9a9a"/><rect x="62" y="220" width="80" height="6" fill="#9a9a9a"/><rect x="68" y="235" width="70" height="6" fill="#9a9a9a"/><ellipse cx="103" cy="372" rx="62" ry="22" fill="#d8d8d8" opacity="0.8"/></g><defs><linearGradient id="mg75208" x1="0" x2="1"><stop offset="0" stop-color="#1fb7ef"/><stop offset="1" stop-color="#0f8fdc"/></linearGradient></defs><g transform="translate(609,81)"><path d="M41 119 H166 V286.5 A62.5 62.5 0 0 1 41 286.5 Z" fill="#4a494d"/><path d="M0 0 H109 A57 57 0 0 1 166 57 V205 A122 122 0 0 0 41 120 A41 60 0 0 1 0 60 Z" fill="url(#mg75208)"/><rect x="75" y="55" width="36" height="22" fill="#ffffff" opacity="0.75"/><rect x="80" y="168" width="44" height="12" fill="#d8d8d8" opacity="0.8"/><rect x="62" y="205" width="80" height="6" fill="#9a9a9a"/><rect x="62" y="220" width="80" height="6" fill="#9a9a9a"/><rect x="68" y="235" width="70" height="6" fill="#9a9a9a"/><ellipse cx="103" cy="372" rx="62" ry="22" fill="#d8d8d8" opacity="0.8"/></g></g></g><rect x="31.75" y="426.75" width="90.25" height="54" fill="none" stroke="#d0d0d0" stroke-width="1"/></svg>
<div class="t" style="left:9.40px;top:499.10px;font-family:'Liberation Sans';font-size:14px;line-height:14px;color:#555;font-weight:normal;transform:scaleX(0.9363);">6</div>
<svg class="a" style="left:0px;top:490px;overflow:hidden" width="160" height="206" viewBox="0 0 160 206"><defs><linearGradient id="s6g" x1="0" x2="1"><stop offset="0" stop-color="#b8b8b8"/><stop offset="0.5" stop-color="#f4f4f4"/><stop offset="1" stop-color="#b8b8b8"/></linearGradient></defs>
<rect x="31.5" y="11.7" width="91" height="200" fill="url(#s6g)"/>
<rect x="46" y="28" width="17" height="14" rx="4" fill="#7ccc2a"/>
<rect x="43" y="36" width="18" height="130" rx="9" fill="#2b4f9a"/>
<rect x="52" y="165" width="11" height="40" rx="5" fill="#333"/></svg>
<div class="t" style="left:9.80px;top:650.60px;font-family:'Liberation Sans';font-size:14px;line-height:14px;color:#555;font-weight:normal;transform:scaleX(0.9363);">8</div>
<div class="a" style="left:219px;top:164px;width:811px;height:12.3px;background:#fafafa"></div>
<svg class="a" style="left:0px;top:0px;" width="1280" height="200" viewBox="0 0 1280 200"><path d="M227.1 167.5 v5.5" stroke="#333" stroke-width="1.1"/><rect x="234.1" y="169.6" width="1.2" height="1.2" fill="#888"/><rect x="241.8" y="169.6" width="1.2" height="1.2" fill="#888"/><rect x="249.4" y="169.6" width="1.2" height="1.2" fill="#888"/><rect x="264.6" y="169.6" width="1.2" height="1.2" fill="#888"/><rect x="272.2" y="169.6" width="1.2" height="1.2" fill="#888"/><rect x="279.9" y="169.6" width="1.2" height="1.2" fill="#888"/><path d="M288.1 167.5 v5.5" stroke="#333" stroke-width="1.1"/><rect x="295.1" y="169.6" width="1.2" height="1.2" fill="#888"/><rect x="302.8" y="169.6" width="1.2" height="1.2" fill="#888"/><rect x="310.4" y="169.6" width="1.2" height="1.2" fill="#888"/><rect x="325.6" y="169.6" width="1.2" height="1.2" fill="#888"/><rect x="333.2" y="169.6" width="1.2" height="1.2" fill="#888"/><rect x="340.9" y="169.6" width="1.2" height="1.2" fill="#888"/><path d="M349.1 167.5 v5.5" stroke="#333" stroke-width="1.1"/><rect x="356.1" y="169.6" width="1.2" height="1.2" fill="#888"/><rect x="363.8" y="169.6" width="1.2" height="1.2" fill="#888"/><rect x="371.4" y="169.6" width="1.2" height="1.2" fill="#888"/><rect x="386.6" y="169.6" width="1.2" height="1.2" fill="#888"/><rect x="394.2" y="169.6" width="1.2" height="1.2" fill="#888"/><rect x="401.9" y="169.6" width="1.2" height="1.2" fill="#888"/><path d="M410.1 167.5 v5.5" stroke="#333" stroke-width="1.1"/><rect x="417.1" y="169.6" width="1.2" height="1.2" fill="#888"/><rect x="424.8" y="169.6" width="1.2" height="1.2" fill="#888"/><rect x="432.4" y="169.6" width="1.2" height="1.2" fill="#888"/><rect x="447.6" y="169.6" width="1.2" height="1.2" fill="#888"/><rect x="455.2" y="169.6" width="1.2" height="1.2" fill="#888"/><rect x="462.9" y="169.6" width="1.2" height="1.2" fill="#888"/><path d="M471.1 167.5 v5.5" stroke="#333" stroke-width="1.1"/><rect x="478.1" y="169.6" width="1.2" height="1.2" fill="#888"/><rect x="485.8" y="169.6" width="1.2" height="1.2" fill="#888"/><rect x="493.4" y="169.6" width="1.2" height="1.2" fill="#888"/><rect x="508.6" y="169.6" width="1.2" height="1.2" fill="#888"/><rect x="516.2" y="169.6" width="1.2" height="1.2" fill="#888"/><rect x="523.9" y="169.6" width="1.2" height="1.2" fill="#888"/><path d="M532.1 167.5 v5.5" stroke="#333" stroke-width="1.1"/><rect x="539.1" y="169.6" width="1.2" height="1.2" fill="#888"/><rect x="546.8" y="169.6" width="1.2" height="1.2" fill="#888"/><rect x="554.4" y="169.6" width="1.2" height="1.2" fill="#888"/><rect x="569.6" y="169.6" width="1.2" height="1.2" fill="#888"/><rect x="577.2" y="169.6" width="1.2" height="1.2" fill="#888"/><rect x="584.9" y="169.6" width="1.2" height="1.2" fill="#888"/><path d="M593.1 167.5 v5.5" stroke="#333" stroke-width="1.1"/><rect x="600.1" y="169.6" width="1.2" height="1.2" fill="#888"/><rect x="607.8" y="169.6" width="1.2" height="1.2" fill="#888"/><rect x="615.4" y="169.6" width="1.2" height="1.2" fill="#888"/><rect x="630.6" y="169.6" width="1.2" height="1.2" fill="#888"/><rect x="638.2" y="169.6" width="1.2" height="1.2" fill="#888"/><rect x="645.9" y="169.6" width="1.2" height="1.2" fill="#888"/><path d="M654.1 167.5 v5.5" stroke="#333" stroke-width="1.1"/><rect x="661.1" y="169.6" width="1.2" height="1.2" fill="#888"/><rect x="668.8" y="169.6" width="1.2" height="1.2" fill="#888"/><rect x="676.4" y="169.6" width="1.2" height="1.2" fill="#888"/><rect x="691.6" y="169.6" width="1.2" height="1.2" fill="#888"/><rect x="699.2" y="169.6" width="1.2" height="1.2" fill="#888"/><rect x="706.9" y="169.6" width="1.2" height="1.2" fill="#888"/><path d="M715.1 167.5 v5.5" stroke="#333" stroke-width="1.1"/><rect x="722.1" y="169.6" width="1.2" height="1.2" fill="#888"/><rect x="729.8" y="169.6" width="1.2" height="1.2" fill="#888"/><rect x="737.4" y="169.6" width="1.2" height="1.2" fill="#888"/><rect x="752.6" y="169.6" width="1.2" height="1.2" fill="#888"/><rect x="760.2" y="169.6" width="1.2" height="1.2" fill="#888"/><rect x="767.9" y="169.6" width="1.2" height="1.2" fill="#888"/><path d="M776.1 167.5 v5.5" stroke="#333" stroke-width="1.1"/><rect x="783.1" y="169.6" width="1.2" height="1.2" fill="#888"/><rect x="790.8" y="169.6" width="1.2" height="1.2" fill="#888"/><rect x="798.4" y="169.6" width="1.2" height="1.2" fill="#888"/><rect x="813.6" y="169.6" width="1.2" height="1.2" fill="#888"/><rect x="821.2" y="169.6" width="1.2" height="1.2" fill="#888"/><rect x="828.9" y="169.6" width="1.2" height="1.2" fill="#888"/><path d="M837.1 167.5 v5.5" stroke="#333" stroke-width="1.1"/><rect x="844.1" y="169.6" width="1.2" height="1.2" fill="#888"/><rect x="851.8" y="169.6" width="1.2" height="1.2" fill="#888"/><rect x="859.4" y="169.6" width="1.2" height="1.2" fill="#888"/><rect x="874.6" y="169.6" width="1.2" height="1.2" fill="#888"/><rect x="882.2" y="169.6" width="1.2" height="1.2" fill="#888"/><rect x="889.9" y="169.6" width="1.2" height="1.2" fill="#888"/><path d="M898.1 167.5 v5.5" stroke="#333" stroke-width="1.1"/><rect x="905.1" y="169.6" width="1.2" height="1.2" fill="#888"/><rect x="912.8" y="169.6" width="1.2" height="1.2" fill="#888"/><rect x="920.4" y="169.6" width="1.2" height="1.2" fill="#888"/><rect x="935.6" y="169.6" width="1.2" height="1.2" fill="#888"/><rect x="943.2" y="169.6" width="1.2" height="1.2" fill="#888"/><rect x="950.9" y="169.6" width="1.2" height="1.2" fill="#888"/><path d="M959.1 167.5 v5.5" stroke="#333" stroke-width="1.1"/><rect x="966.1" y="169.6" width="1.2" height="1.2" fill="#888"/><rect x="973.8" y="169.6" width="1.2" height="1.2" fill="#888"/><rect x="981.4" y="169.6" width="1.2" height="1.2" fill="#888"/><rect x="996.6" y="169.6" width="1.2" height="1.2" fill="#888"/><rect x="1004.2" y="169.6" width="1.2" height="1.2" fill="#888"/><rect x="1011.9" y="169.6" width="1.2" height="1.2" fill="#888"/><path d="M1020.1 167.5 v5.5" stroke="#333" stroke-width="1.1"/></svg>
<div class="t" style="left:254.35px;top:164.10px;font-family:'Liberation Sans';font-size:12px;line-height:12px;color:#333;font-weight:normal;transform:scaleX(0.9720);">6</div>
<div class="t" style="left:315.35px;top:164.10px;font-family:'Liberation Sans';font-size:12px;line-height:12px;color:#333;font-weight:normal;transform:scaleX(0.9720);">5</div>
<div class="t" style="left:376.35px;top:164.10px;font-family:'Liberation Sans';font-size:12px;line-height:12px;color:#333;font-weight:normal;transform:scaleX(0.9720);">4</div>
<div class="t" style="left:437.35px;top:164.10px;font-family:'Liberation Sans';font-size:12px;line-height:12px;color:#333;font-weight:normal;transform:scaleX(0.9720);">3</div>
<div class="t" style="left:498.35px;top:164.10px;font-family:'Liberation Sans';font-size:12px;line-height:12px;color:#333;font-weight:normal;transform:scaleX(0.9720);">2</div>
<div class="t" style="left:559.35px;top:164.10px;font-family:'Liberation Sans';font-size:12px;line-height:12px;color:#333;font-weight:normal;transform:scaleX(0.9720);">1</div>
<div class="t" style="left:620.35px;top:164.10px;font-family:'Liberation Sans';font-size:12px;line-height:12px;color:#333;font-weight:normal;transform:scaleX(0.9720);">0</div>
<div class="t" style="left:681.35px;top:164.10px;font-family:'Liberation Sans';font-size:12px;line-height:12px;color:#333;font-weight:normal;transform:scaleX(0.9720);">1</div>
<div class="t" style="left:742.35px;top:164.10px;font-family:'Liberation Sans';font-size:12px;line-height:12px;color:#333;font-weight:normal;transform:scaleX(0.9720);">2</div>
<div class="t" style="left:803.35px;top:164.10px;font-family:'Liberation Sans';font-size:12px;line-height:12px;color:#333;font-weight:normal;transform:scaleX(0.9720);">3</div>
<div class="t" style="left:864.35px;top:164.10px;font-family:'Liberation Sans';font-size:12px;line-height:12px;color:#333;font-weight:normal;transform:scaleX(0.9720);">4</div>
<div class="t" style="left:925.35px;top:164.10px;font-family:'Liberation Sans';font-size:12px;line-height:12px;color:#333;font-weight:normal;transform:scaleX(0.9720);">5</div>
<div class="t" style="left:986.35px;top:164.10px;font-family:'Liberation Sans';font-size:12px;line-height:12px;color:#333;font-weight:normal;transform:scaleX(0.9720);">6</div>
<div class="a" style="left:169px;top:198.7px;width:11.3px;height:481px;background:#fafafa"></div>
<svg class="a" style="left:0px;top:0px;" width="200" height="700" viewBox="0 0 200 700"><rect x="174" y="205.4" width="1.2" height="1.2" fill="#888"/><path d="M172 214.0 h5.5" stroke="#333" stroke-width="1.1"/><rect x="174" y="221.4" width="1.2" height="1.2" fill="#888"/><rect x="174" y="229.4" width="1.2" height="1.2" fill="#888"/><rect x="174" y="237.5" width="1.2" height="1.2" fill="#888"/><rect x="174" y="253.5" width="1.2" height="1.2" fill="#888"/><rect x="174" y="261.5" width="1.2" height="1.2" fill="#888"/><rect x="174" y="269.6" width="1.2" height="1.2" fill="#888"/><path d="M172 278.2 h5.5" stroke="#333" stroke-width="1.1"/><rect x="174" y="285.6" width="1.2" height="1.2" fill="#888"/><rect x="174" y="293.6" width="1.2" height="1.2" fill="#888"/><rect x="174" y="301.7" width="1.2" height="1.2" fill="#888"/><rect x="174" y="317.7" width="1.2" height="1.2" fill="#888"/><rect x="174" y="325.7" width="1.2" height="1.2" fill="#888"/><rect x="174" y="333.8" width="1.2" height="1.2" fill="#888"/><path d="M172 342.4 h5.5" stroke="#333" stroke-width="1.1"/><rect x="174" y="349.8" width="1.2" height="1.2" fill="#888"/><rect x="174" y="357.8" width="1.2" height="1.2" fill="#888"/><rect x="174" y="365.9" width="1.2" height="1.2" fill="#888"/><rect x="174" y="381.9" width="1.2" height="1.2" fill="#888"/><rect x="174" y="389.9" width="1.2" height="1.2" fill="#888"/><rect x="174" y="398.0" width="1.2" height="1.2" fill="#888"/><path d="M172 406.6 h5.5" stroke="#333" stroke-width="1.1"/><rect x="174" y="414.0" width="1.2" height="1.2" fill="#888"/><rect x="174" y="422.0" width="1.2" height="1.2" fill="#888"/><rect x="174" y="430.1" width="1.2" height="1.2" fill="#888"/><rect x="174" y="446.1" width="1.2" height="1.2" fill="#888"/><rect x="174" y="454.1" width="1.2" height="1.2" fill="#888"/><rect x="174" y="462.2" width="1.2" height="1.2" fill="#888"/><path d="M172 470.8 h5.5" stroke="#333" stroke-width="1.1"/><rect x="174" y="478.2" width="1.2" height="1.2" fill="#888"/><rect x="174" y="486.2" width="1.2" height="1.2" fill="#888"/><rect x="174" y="494.3" width="1.2" height="1.2" fill="#888"/><rect x="174" y="510.3" width="1.2" height="1.2" fill="#888"/><rect x="174" y="518.4" width="1.2" height="1.2" fill="#888"/><rect x="174" y="526.4" width="1.2" height="1.2" fill="#888"/><path d="M172 535.0 h5.5" stroke="#333" stroke-width="1.1"/><rect x="174" y="542.4" width="1.2" height="1.2" fill="#888"/><rect x="174" y="550.4" width="1.2" height="1.2" fill="#888"/><rect x="174" y="558.5" width="1.2" height="1.2" fill="#888"/><rect x="174" y="574.5" width="1.2" height="1.2" fill="#888"/><rect x="174" y="582.5" width="1.2" height="1.2" fill="#888"/><rect x="174" y="590.6" width="1.2" height="1.2" fill="#888"/><path d="M172 599.2 h5.5" stroke="#333" stroke-width="1.1"/><rect x="174" y="606.6" width="1.2" height="1.2" fill="#888"/><rect x="174" y="614.6" width="1.2" height="1.2" fill="#888"/><rect x="174" y="622.7" width="1.2" height="1.2" fill="#888"/><rect x="174" y="638.7" width="1.2" height="1.2" fill="#888"/><rect x="174" y="646.8" width="1.2" height="1.2" fill="#888"/><rect x="174" y="654.8" width="1.2" height="1.2" fill="#888"/><path d="M172 663.4 h5.5" stroke="#333" stroke-width="1.1"/><rect x="174" y="670.8" width="1.2" height="1.2" fill="#888"/></svg>
<div class="t" style="left:168.7px;top:240.09999999999997px;width:12px;height:12px;font-size:11.5px;line-height:12px;text-align:center;color:#333;transform:rotate(-90deg);transform-origin:6px 6px">3</div>
<div class="t" style="left:168.7px;top:304.29999999999995px;width:12px;height:12px;font-size:11.5px;line-height:12px;text-align:center;color:#333;transform:rotate(-90deg);transform-origin:6px 6px">2</div>
<div class="t" style="left:168.7px;top:368.5px;width:12px;height:12px;font-size:11.5px;line-height:12px;text-align:center;color:#333;transform:rotate(-90deg);transform-origin:6px 6px">1</div>
<div class="t" style="left:168.7px;top:432.7px;width:12px;height:12px;font-size:11.5px;line-height:12px;text-align:center;color:#333;transform:rotate(-90deg);transform-origin:6px 6px">0</div>
<div class="t" style="left:168.7px;top:496.9px;width:12px;height:12px;font-size:11.5px;line-height:12px;text-align:center;color:#333;transform:rotate(-90deg);transform-origin:6px 6px">1</div>
<div class="t" style="left:168.7px;top:561.1px;width:12px;height:12px;font-size:11.5px;line-height:12px;text-align:center;color:#333;transform:rotate(-90deg);transform-origin:6px 6px">2</div>
<div class="t" style="left:168.7px;top:625.3px;width:12px;height:12px;font-size:11.5px;line-height:12px;text-align:center;color:#333;transform:rotate(-90deg);transform-origin:6px 6px">3</div>
<div class="a" style="left:216.5px;top:197.3px;width:813.5px;height:483.2px;background:#fefefe;box-shadow:0 0 2px rgba(0,0,0,0.15)"></div>
<div class="a" style="left:1057px;top:158px;width:16px;height:538px;background:#ececec"></div>
<div class="a" style="left:1073px;top:158px;width:1px;height:538px;background:#d0d0d0"></div>
<div class="a" style="left:1058.3px;top:163px;width:14px;height:12px;background:#fff;border:1px solid #8a8a8a"></div>
<svg class="a" style="left:1058.3px;top:163px;" width="14" height="12" viewBox="0 0 14 12"><path d="M3.5 8 L7 4.5 L10.5 8 Z" fill="#111"/></svg>
<div class="a" style="left:1058.3px;top:289px;width:14px;height:54px;background:#fff;border:1px solid #a8a8a8"></div>
<div class="a" style="left:1058.3px;top:625px;width:14.3px;height:15px;background:#fff;border:1px solid #8a8a8a"></div>
<svg class="a" style="left:1058.3px;top:625px;" width="14" height="15" viewBox="0 0 14 15"><path d="M3.5 5.5 L7 9.5 L10.5 5.5 Z" fill="#111"/></svg>
<svg class="a" style="left:1058px;top:643px;" width="16" height="30" viewBox="0 0 16 30"><g fill="#6f6f6f"><path d="M7.5 1.5 l3.5 3.5 h-1.5 l3 3.5 v3 h-10 v-3 l3 -3.5 h-1.5z"/><path d="M2.5 17 h10 v3 l-3 3.5 h1.5 l-3.5 3.5 l-3.5 -3.5 h1.5 l-3 -3.5z"/></g></svg>
<svg class="a" style="left:0px;top:0px;overflow:hidden" width="1280" height="720" viewBox="0 0 1280 720"><defs><linearGradient id="tmg" x1="0" y1="0" x2="0" y2="1" gradientUnits="userSpaceOnUse" ><stop offset="0" stop-color="#fff"/></linearGradient><mask id="tm" maskUnits="userSpaceOnUse" x="-50" y="0" width="300" height="400"><rect x="-50" y="0" width="300" height="400" fill="url(#tmlg)"/></mask><linearGradient id="tmlg" gradientUnits="userSpaceOnUse" x1="0" y1="185" x2="0" y2="240"><stop offset="0" stop-color="#fff"/><stop offset="1" stop-color="#000"/></linearGradient><radialGradient id="psh" gradientUnits="userSpaceOnUse" cx="47" cy="245" r="127"><stop offset="0" stop-color="#4b4a4e" stop-opacity="0"/><stop offset="0.72" stop-color="#4b4a4e" stop-opacity="0"/><stop offset="0.9" stop-color="#2c2b2e"/><stop offset="1" stop-color="#1a1a1c"/></radialGradient><filter id="blur8" x="-50%" y="-50%" width="200%" height="200%"><feGaussianBlur stdDeviation="9"/></filter><filter id="blur6" x="-50%" y="-50%" width="200%" height="200%"><feGaussianBlur stdDeviation="6.5"/></filter><filter id="blur5" x="-50%" y="-50%" width="200%" height="200%"><feGaussianBlur stdDeviation="5"/></filter></defs><defs><linearGradient id="cg0" x1="0" x2="1"><stop offset="0" stop-color="#00b2ef"/><stop offset="0.35" stop-color="#03aceb"/><stop offset="1" stop-color="#068ad8"/></linearGradient>
<clipPath id="tc0"><rect x="0" y="100" width="170" height="125"/></clipPath><clipPath id="pc0"><path d="M41 114 H166 V286.5 A62.5 62.5 0 0 1 41 286.5 Z"/></clipPath>
<clipPath id="lc0"><rect x="-30" y="40" width="71" height="140"/></clipPath></defs>
<g transform="translate(271,278)">
<path d="M41 114 H166 V286.5 A62.5 62.5 0 0 1 41 286.5 Z" fill="#4b4a4e"/>
<g clip-path="url(#pc0)"><g mask="url(#tm)"><circle cx="47" cy="245" r="127" fill="url(#psh)"/></g></g>
<g clip-path="url(#lc0)"><path d="M5 70 A62 62 0 0 0 62 140 L62 100 L20 62 Z" fill="#000" opacity="0.55" filter="url(#blur6)"/></g>
<path d="M0 0 H110 A56 56 0 0 1 166 56 V206.7 A125 125 0 0 0 52 120.1 L52 119.5 A60 60 0 0 1 0 60 Z" fill="url(#cg0)"/>
<g transform="translate(77.75,277.8)"><g fill="#f2f2f2">
<path d="M2.5 7 H36.5 V35 H2.5 a2.5 2.5 0 0 1 -2.5 -2.5 V9.5 a2.5 2.5 0 0 1 2.5 -2.5z"/>
<path d="M35.5 11.7 H43 L47.3 22 L50.6 23.8 a1.2 1.2 0 0 1 1 1.2 V33 a1.5 1.5 0 0 1 -1.5 1.5 H35.5z"/>
<circle cx="35.8" cy="8.2" r="3"/>
</g>
<path d="M37 14.2 H43 L45.3 20.2 H37z" fill="#4a494d"/>
<g stroke="#4a494d" stroke-width="4"><path d="M18.75 12 V26.4 M12.5 15.6 L25 22.8 M12.5 22.8 L25 15.6"/></g>
<g stroke="#4a494d" stroke-width="1.2"><path d="M31 1 l1.6 3 M35.8 0 v3.4 M40.6 1 l-1.6 3"/></g>
<circle cx="10.45" cy="34.9" r="6.3" fill="#4a494d"/><circle cx="10.45" cy="34.9" r="4.9" fill="#f2f2f2"/>
<circle cx="42.5" cy="34.9" r="6.3" fill="#4a494d"/><circle cx="42.5" cy="34.9" r="4.9" fill="#f2f2f2"/></g>
</g><defs><linearGradient id="cg1" x1="0" x2="1"><stop offset="0" stop-color="#05aeee"/><stop offset="0.4" stop-color="#06a4e6"/><stop offset="1" stop-color="#0a86d6"/></linearGradient>
<clipPath id="tc1"><rect x="0" y="100" width="170" height="125"/></clipPath><clipPath id="pc1"><path d="M41 114 H166 V286.5 A62.5 62.5 0 0 1 41 286.5 Z"/></clipPath>
<clipPath id="lc1"><rect x="-30" y="40" width="71" height="140"/></clipPath></defs>
<g transform="translate(456,278)">
<path d="M41 114 H166 V286.5 A62.5 62.5 0 0 1 41 286.5 Z" fill="#4b4a4e"/>
<g clip-path="url(#pc1)"><g mask="url(#tm)"><circle cx="47" cy="245" r="127" fill="url(#psh)"/></g></g>
<g clip-path="url(#lc1)"><path d="M5 70 A62 62 0 0 0 62 140 L62 100 L20 62 Z" fill="#000" opacity="0.55" filter="url(#blur6)"/></g>
<path d="M0 0 H110 A56 56 0 0 1 166 56 V206.7 A125 125 0 0 0 52 120.1 L52 119.5 A60 60 0 0 1 0 60 Z" fill="url(#cg1)"/>
<g transform="translate(77.75,277.8)"><g fill="#f2f2f2">
<path d="M2.5 7 H36.5 V35 H2.5 a2.5 2.5 0 0 1 -2.5 -2.5 V9.5 a2.5 2.5 0 0 1 2.5 -2.5z"/>
<path d="M35.5 11.7 H43 L47.3 22 L50.6 23.8 a1.2 1.2 0 0 1 1 1.2 V33 a1.5 1.5 0 0 1 -1.5 1.5 H35.5z"/>
<circle cx="35.8" cy="8.2" r="3"/>
</g>
<path d="M37 14.2 H43 L45.3 20.2 H37z" fill="#4a494d"/>
<g stroke="#4a494d" stroke-width="4"><path d="M18.75 12 V26.4 M12.5 15.6 L25 22.8 M12.5 22.8 L25 15.6"/></g>
<g stroke="#4a494d" stroke-width="1.2"><path d="M31 1 l1.6 3 M35.8 0 v3.4 M40.6 1 l-1.6 3"/></g>
<circle cx="10.45" cy="34.9" r="6.3" fill="#4a494d"/><circle cx="10.45" cy="34.9" r="4.9" fill="#f2f2f2"/>
<circle cx="42.5" cy="34.9" r="6.3" fill="#4a494d"/><circle cx="42.5" cy="34.9" r="4.9" fill="#f2f2f2"/></g>
</g><defs><linearGradient id="cg2" x1="0" x2="1"><stop offset="0" stop-color="#ffe800"/><stop offset="0.45" stop-color="#ffd400"/><stop offset="1" stop-color="#ffbf00"/></linearGradient>
<clipPath id="tc2"><rect x="0" y="100" width="170" height="125"/></clipPath><clipPath id="pc2"><path d="M41 114 H166 V286.5 A62.5 62.5 0 0 1 41 286.5 Z"/></clipPath>
<clipPath id="lc2"><rect x="-30" y="40" width="71" height="140"/></clipPath></defs>
<g transform="translate(641,278)">
<path d="M41 114 H166 V286.5 A62.5 62.5 0 0 1 41 286.5 Z" fill="#4b4a4e"/>
<g clip-path="url(#pc2)"><g mask="url(#tm)"><circle cx="47" cy="245" r="127" fill="url(#psh)"/></g></g>
<g clip-path="url(#lc2)"><path d="M5 70 A62 62 0 0 0 62 140 L62 100 L20 62 Z" fill="#000" opacity="0.55" filter="url(#blur6)"/></g>
<path d="M0 0 H110 A56 56 0 0 1 166 56 V206.7 A125 125 0 0 0 52 120.1 L52 119.5 A60 60 0 0 1 0 60 Z" fill="url(#cg2)"/>
<g transform="translate(77.75,277.8)"><g fill="#f2f2f2">
<path d="M2.5 7 H36.5 V35 H2.5 a2.5 2.5 0 0 1 -2.5 -2.5 V9.5 a2.5 2.5 0 0 1 2.5 -2.5z"/>
<path d="M35.5 11.7 H43 L47.3 22 L50.6 23.8 a1.2 1.2 0 0 1 1 1.2 V33 a1.5 1.5 0 0 1 -1.5 1.5 H35.5z"/>
<circle cx="35.8" cy="8.2" r="3"/>
</g>
<path d="M37 14.2 H43 L45.3 20.2 H37z" fill="#4a494d"/>
<g stroke="#4a494d" stroke-width="4"><path d="M18.75 12 V26.4 M12.5 15.6 L25 22.8 M12.5 22.8 L25 15.6"/></g>
<g stroke="#4a494d" stroke-width="1.2"><path d="M31 1 l1.6 3 M35.8 0 v3.4 M40.6 1 l-1.6 3"/></g>
<circle cx="10.45" cy="34.9" r="6.3" fill="#4a494d"/><circle cx="10.45" cy="34.9" r="4.9" fill="#f2f2f2"/>
<circle cx="42.5" cy="34.9" r="6.3" fill="#4a494d"/><circle cx="42.5" cy="34.9" r="4.9" fill="#f2f2f2"/></g>
</g><defs><linearGradient id="cg3" x1="0" x2="1"><stop offset="0" stop-color="#92d050"/><stop offset="0.35" stop-color="#8acd50"/><stop offset="0.75" stop-color="#14b352"/><stop offset="1" stop-color="#00b050"/></linearGradient>
<clipPath id="tc3"><rect x="0" y="100" width="170" height="125"/></clipPath><clipPath id="pc3"><path d="M41 114 H166 V286.5 A62.5 62.5 0 0 1 41 286.5 Z"/></clipPath>
<clipPath id="lc3"><rect x="-30" y="40" width="71" height="140"/></clipPath></defs>
<g transform="translate(826,278)">
<path d="M41 114 H166 V286.5 A62.5 62.5 0 0 1 41 286.5 Z" fill="#4b4a4e"/>
<g clip-path="url(#pc3)"><g mask="url(#tm)"><circle cx="47" cy="245" r="127" fill="url(#psh)"/></g></g>
<g clip-path="url(#lc3)"><path d="M5 70 A62 62 0 0 0 62 140 L62 100 L20 62 Z" fill="#000" opacity="0.55" filter="url(#blur6)"/></g>
<path d="M0 0 H110 A56 56 0 0 1 166 56 V206.7 A125 125 0 0 0 52 120.1 L52 119.5 A60 60 0 0 1 0 60 Z" fill="url(#cg3)"/>
<g transform="translate(77.75,277.8)"><g fill="#f2f2f2">
<path d="M2.5 7 H36.5 V35 H2.5 a2.5 2.5 0 0 1 -2.5 -2.5 V9.5 a2.5 2.5 0 0 1 2.5 -2.5z"/>
<path d="M35.5 11.7 H43 L47.3 22 L50.6 23.8 a1.2 1.2 0 0 1 1 1.2 V33 a1.5 1.5 0 0 1 -1.5 1.5 H35.5z"/>
<circle cx="35.8" cy="8.2" r="3"/>
</g>
<path d="M37 14.2 H43 L45.3 20.2 H37z" fill="#4a494d"/>
<g stroke="#4a494d" stroke-width="4"><path d="M18.75 12 V26.4 M12.5 15.6 L25 22.8 M12.5 22.8 L25 15.6"/></g>
<g stroke="#4a494d" stroke-width="1.2"><path d="M31 1 l1.6 3 M35.8 0 v3.4 M40.6 1 l-1.6 3"/></g>
<circle cx="10.45" cy="34.9" r="6.3" fill="#4a494d"/><circle cx="10.45" cy="34.9" r="4.9" fill="#f2f2f2"/>
<circle cx="42.5" cy="34.9" r="6.3" fill="#4a494d"/><circle cx="42.5" cy="34.9" r="4.9" fill="#f2f2f2"/></g>
</g></svg>
<div class="t" style="left:345.00px;top:332.33px;font-family:'Liberation Sans';font-size:31.5px;line-height:31.5px;color:#ffffff;font-weight:bold;transform:scaleX(1.0272);">01</div>
<div class="t" style="left:354.00px;top:446.10px;font-family:'Liberation Sans';font-size:16px;line-height:16px;color:#f4f4f4;font-weight:bold;transform:scaleX(0.8326);">TITLE</div>
<div class="t" style="left:318.85px;top:487.93px;font-family:'Liberation Sans';font-size:9.5px;line-height:9.5px;color:#dcdcdc;font-weight:normal;transform:scaleX(0.9324);">Lorem ipsum dolor sit amet,</div>
<div class="t" style="left:321.50px;top:499.73px;font-family:'Liberation Sans';font-size:9.5px;line-height:9.5px;color:#dcdcdc;font-weight:normal;transform:scaleX(0.8910);">consectetuer adipiscing elit.</div>
<div class="t" style="left:322.50px;top:511.53px;font-family:'Liberation Sans';font-size:9.5px;line-height:9.5px;color:#dcdcdc;font-weight:normal;transform:scaleX(0.9068);">Maecenas porttitor congue</div>
<div class="t" style="left:361.15px;top:523.32px;font-family:'Liberation Sans';font-size:9.5px;line-height:9.5px;color:#dcdcdc;font-weight:normal;transform:scaleX(0.8065);">massa.</div>
<div class="t" style="left:900.00px;top:332.33px;font-family:'Liberation Sans';font-size:31.5px;line-height:31.5px;color:#ffffff;font-weight:bold;transform:scaleX(1.0272);">04</div>
<div class="t" style="left:909.00px;top:446.10px;font-family:'Liberation Sans';font-size:16px;line-height:16px;color:#f4f4f4;font-weight:bold;transform:scaleX(0.8326);">TITLE</div>
<div class="t" style="left:873.85px;top:487.93px;font-family:'Liberation Sans';font-size:9.5px;line-height:9.5px;color:#dcdcdc;font-weight:normal;transform:scaleX(0.9324);">Lorem ipsum dolor sit amet,</div>
<div class="t" style="left:876.50px;top:499.73px;font-family:'Liberation Sans';font-size:9.5px;line-height:9.5px;color:#dcdcdc;font-weight:normal;transform:scaleX(0.8910);">consectetuer adipiscing elit.</div>
<div class="t" style="left:877.50px;top:511.53px;font-family:'Liberation Sans';font-size:9.5px;line-height:9.5px;color:#dcdcdc;font-weight:normal;transform:scaleX(0.9068);">Maecenas porttitor congue</div>
<div class="t" style="left:916.15px;top:523.32px;font-family:'Liberation Sans';font-size:9.5px;line-height:9.5px;color:#dcdcdc;font-weight:normal;transform:scaleX(0.8065);">massa.</div>
<div class="t" style="left:503.85px;top:487.93px;font-family:'Liberation Sans';font-size:9.5px;line-height:9.5px;color:#dcdcdc;font-weight:normal;transform:scaleX(0.9324);">Lorem ipsum dolor sit amet,</div>
<div class="t" style="left:506.50px;top:499.73px;font-family:'Liberation Sans';font-size:9.5px;line-height:9.5px;color:#dcdcdc;font-weight:normal;transform:scaleX(0.8910);">consectetuer adipiscing elit.</div>
<div class="t" style="left:507.50px;top:511.53px;font-family:'Liberation Sans';font-size:9.5px;line-height:9.5px;color:#dcdcdc;font-weight:normal;transform:scaleX(0.9068);">Maecenas porttitor congue</div>
<div class="t" style="left:546.15px;top:523.32px;font-family:'Liberation Sans';font-size:9.5px;line-height:9.5px;color:#dcdcdc;font-weight:normal;transform:scaleX(0.8065);">massa.</div>
<div class="t" style="left:688.85px;top:487.93px;font-family:'Liberation Sans';font-size:9.5px;line-height:9.5px;color:#dcdcdc;font-weight:normal;transform:scaleX(0.9324);">Lorem ipsum dolor sit amet,</div>
<div class="t" style="left:691.50px;top:499.73px;font-family:'Liberation Sans';font-size:9.5px;line-height:9.5px;color:#dcdcdc;font-weight:normal;transform:scaleX(0.8910);">consectetuer adipiscing elit.</div>
<div class="t" style="left:692.50px;top:511.53px;font-family:'Liberation Sans';font-size:9.5px;line-height:9.5px;color:#dcdcdc;font-weight:normal;transform:scaleX(0.9068);">Maecenas porttitor congue</div>
<div class="t" style="left:731.15px;top:523.32px;font-family:'Liberation Sans';font-size:9.5px;line-height:9.5px;color:#dcdcdc;font-weight:normal;transform:scaleX(0.8065);">massa.</div>
<svg class="a" style="left:0px;top:0px;" width="1280" height="720" viewBox="0 0 1280 720"><path d="M189 436.8 H1056" stroke="#8c8c8c" stroke-width="1" stroke-dasharray="3.5 3"/><path d="M621.5 180 V692" stroke="#8c8c8c" stroke-width="1" stroke-dasharray="3.5 3"/></svg>
<svg class="a" style="left:0px;top:0px;" width="1280" height="720" viewBox="0 0 1280 720"><rect x="263.5" y="269.5" width="181.5" height="262.5" fill="none" stroke="#6a6a6a" stroke-width="1.2"/><path d="M354.2 246 V264.5" stroke="#666" stroke-width="1.2"/><circle cx="263.5" cy="269.5" r="4.8" fill="#fff" stroke="#5a5a5a" stroke-width="1.4"/><circle cx="354.2" cy="269.5" r="4.8" fill="#fff" stroke="#5a5a5a" stroke-width="1.4"/><circle cx="445" cy="269.5" r="4.8" fill="#fff" stroke="#5a5a5a" stroke-width="1.4"/><circle cx="263.5" cy="401" r="4.8" fill="#fff" stroke="#5a5a5a" stroke-width="1.4"/><circle cx="445" cy="401" r="4.8" fill="#fff" stroke="#5a5a5a" stroke-width="1.4"/><circle cx="263.5" cy="532" r="4.8" fill="#fff" stroke="#5a5a5a" stroke-width="1.4"/><circle cx="445" cy="532" r="4.8" fill="#fff" stroke="#5a5a5a" stroke-width="1.4"/><circle cx="354" cy="532.5" r="4" fill="#fff"/><path d="M360 235.9 A6.1 6.1 0 1 0 358.7 240.9" fill="none" stroke="#6a6a6a" stroke-width="5.6"/><path d="M360 235.9 A6.1 6.1 0 1 0 358.7 240.9" fill="none" stroke="#fff" stroke-width="2.8"/><path d="M356.5 235.8 L368.8 234.6 L362.2 241.8 Z" fill="#fff" stroke="#6a6a6a" stroke-width="1.3" stroke-linejoin="round"/><path d="M358 236 L362 235.6" stroke="#fff" stroke-width="2"/></svg>
<div class="a" style="left:511px;top:137.5px;width:257px;height:437px;background:#fdfdfd;border:1px solid #9a9a9a;box-shadow:3px 3px 10px rgba(0,0,0,0.28)"></div>
<div class="t" style="left:519.40px;top:146.62px;font-family:'Liberation Sans';font-size:11.5px;line-height:11.5px;color:#222;font-weight:normal;transform:scaleX(0.9463);">Add Entrance Effect</div>
<div class="t" style="left:701.70px;top:146.80px;font-family:'Liberation Sans';font-size:12px;line-height:12px;color:#333;font-weight:bold;transform:scaleX(0.6809);">?</div>
<svg class="a" style="left:738px;top:144px;" width="16" height="16" viewBox="0 0 16 16"><path d="M3 3.4 L13 13.4 M13 3.4 L3 13.4" stroke="#333" stroke-width="1.3"/></svg>
<div class="a" style="left:517.5px;top:175px;width:244.5px;height:366px;background:#fff;border:1px solid #a0a0a0"></div>
<div class="a" style="left:745px;top:176px;width:16px;height:364px;background:#f4f4f4"></div>
<div class="a" style="left:746px;top:194.6px;width:12.5px;height:236px;background:#cdcdcd"></div>
<svg class="a" style="left:745px;top:176px;" width="16" height="364" viewBox="0 0 16 364"><path d="M4.5 12.5 L8 9 L11.5 12.5" fill="none" stroke="#444" stroke-width="1.4"/><path d="M4.5 354 L8 357.5 L11.5 354" fill="none" stroke="#444" stroke-width="1.4"/></svg>
<div class="a" style="left:518.5px;top:176px;width:226.5px;height:22px;background:linear-gradient(90deg,#e9e9e9,#ececec 80%,#f0f0f0)"></div>
<div class="t" style="left:527.80px;top:181.65px;font-family:'Liberation Sans';font-size:11px;line-height:11px;color:#505050;font-weight:bold;transform:scaleX(0.8754);">Basic</div>
<div class="a" style="left:518.5px;top:357px;width:226.5px;height:21px;background:linear-gradient(90deg,#e9e9e9,#ececec 80%,#f0f0f0)"></div>
<div class="t" style="left:527.80px;top:363.15px;font-family:'Liberation Sans';font-size:11px;line-height:11px;color:#505050;font-weight:bold;transform:scaleX(0.9814);">Subtle</div>
<div class="a" style="left:518.5px;top:418.4px;width:226.5px;height:21.0px;background:linear-gradient(90deg,#e9e9e9,#ececec 80%,#f0f0f0)"></div>
<div class="t" style="left:527.80px;top:424.45px;font-family:'Liberation Sans';font-size:11px;line-height:11px;color:#505050;font-weight:bold;transform:scaleX(1.0428);">Moderate</div>
<div class="a" style="left:519.4px;top:199.2px;width:100.3px;height:19px;background:#d5d5d5;border:1px solid #a8a8a8"></div>
<div class="a" style="left:620px;top:480.5px;width:101px;height:18.1px;background:#e4e4e4"></div>
<div class="t" style="left:541.00px;top:203.55px;font-family:'Liberation Sans';font-size:11px;line-height:11px;color:#3c3c3c;font-weight:normal;">Appear</div>
<div class="t" style="left:541.00px;top:223.35px;font-family:'Liberation Sans';font-size:11px;line-height:11px;color:#505050;font-weight:normal;">Box</div>
<div class="t" style="left:541.00px;top:242.85px;font-family:'Liberation Sans';font-size:11px;line-height:11px;color:#505050;font-weight:normal;">Circle</div>
<div class="t" style="left:541.00px;top:262.85px;font-family:'Liberation Sans';font-size:11px;line-height:11px;color:#505050;font-weight:normal;">Dissolve In</div>
<div class="t" style="left:541.00px;top:282.55px;font-family:'Liberation Sans';font-size:11px;line-height:11px;color:#505050;font-weight:normal;">Peek In</div>
<div class="t" style="left:541.00px;top:302.15px;font-family:'Liberation Sans';font-size:11px;line-height:11px;color:#505050;font-weight:normal;">Random Bars</div>
<div class="t" style="left:541.00px;top:321.85px;font-family:'Liberation Sans';font-size:11px;line-height:11px;color:#505050;font-weight:normal;">Strips</div>
<div class="t" style="left:541.00px;top:341.85px;font-family:'Liberation Sans';font-size:11px;line-height:11px;color:#505050;font-weight:normal;">Wheel</div>
<div class="t" style="left:541.00px;top:383.35px;font-family:'Liberation Sans';font-size:11px;line-height:11px;color:#505050;font-weight:normal;">Expand</div>
<div class="t" style="left:541.00px;top:403.15px;font-family:'Liberation Sans';font-size:11px;line-height:11px;color:#505050;font-weight:normal;">Swivel</div>
<div class="t" style="left:541.00px;top:444.75px;font-family:'Liberation Sans';font-size:11px;line-height:11px;color:#505050;font-weight:normal;">Basic Zoom</div>
<div class="t" style="left:541.00px;top:464.55px;font-family:'Liberation Sans';font-size:11px;line-height:11px;color:#505050;font-weight:normal;">Compress</div>
<div class="t" style="left:541.00px;top:484.45px;font-family:'Liberation Sans';font-size:11px;line-height:11px;color:#505050;font-weight:normal;">Float Up</div>
<div class="t" style="left:541.00px;top:503.85px;font-family:'Liberation Sans';font-size:11px;line-height:11px;color:#505050;font-weight:normal;">Rise Up</div>
<div class="t" style="left:541.00px;top:523.45px;font-family:'Liberation Sans';font-size:11px;line-height:11px;color:#505050;font-weight:normal;">Stretch</div>
<div class="t" style="left:642.00px;top:203.55px;font-family:'Liberation Sans';font-size:11px;line-height:11px;color:#505050;font-weight:normal;">Blinds</div>
<div class="t" style="left:642.00px;top:223.35px;font-family:'Liberation Sans';font-size:11px;line-height:11px;color:#505050;font-weight:normal;">Checkerboard</div>
<div class="t" style="left:642.00px;top:242.85px;font-family:'Liberation Sans';font-size:11px;line-height:11px;color:#505050;font-weight:normal;">Diamond</div>
<div class="t" style="left:642.00px;top:262.85px;font-family:'Liberation Sans';font-size:11px;line-height:11px;color:#505050;font-weight:normal;">Fly In</div>
<div class="t" style="left:642.00px;top:282.55px;font-family:'Liberation Sans';font-size:11px;line-height:11px;color:#505050;font-weight:normal;">Plus</div>
<div class="t" style="left:642.00px;top:302.15px;font-family:'Liberation Sans';font-size:11px;line-height:11px;color:#505050;font-weight:normal;">Split</div>
<div class="t" style="left:642.00px;top:321.85px;font-family:'Liberation Sans';font-size:11px;line-height:11px;color:#505050;font-weight:normal;">Wedge</div>
<div class="t" style="left:642.00px;top:341.85px;font-family:'Liberation Sans';font-size:11px;line-height:11px;color:#505050;font-weight:normal;">Wipe</div>
<div class="t" style="left:642.00px;top:383.35px;font-family:'Liberation Sans';font-size:11px;line-height:11px;color:#505050;font-weight:normal;">Fade</div>
<div class="t" style="left:642.00px;top:403.15px;font-family:'Liberation Sans';font-size:11px;line-height:11px;color:#505050;font-weight:normal;">Zoom</div>
<div class="t" style="left:642.00px;top:444.75px;font-family:'Liberation Sans';font-size:11px;line-height:11px;color:#505050;font-weight:normal;">Center Revolve</div>
<div class="t" style="left:642.00px;top:464.55px;font-family:'Liberation Sans';font-size:11px;line-height:11px;color:#505050;font-weight:normal;">Float Down</div>
<div class="t" style="left:642.00px;top:484.45px;font-family:'Liberation Sans';font-size:11px;line-height:11px;color:#505050;font-weight:normal;">Grow &amp; Turn</div>
<div class="t" style="left:642.00px;top:503.85px;font-family:'Liberation Sans';font-size:11px;line-height:11px;color:#505050;font-weight:normal;">Spinner</div>
<svg class="a" style="left:0px;top:0px;" width="1280" height="720" viewBox="0 0 1280 720"><path d="M528.50,202.30 L530.53,206.70 L535.35,207.28 L531.79,210.57 L532.73,215.32 L528.50,212.96 L524.27,215.32 L525.21,210.57 L521.65,207.28 L526.47,206.70 Z" fill="#5cb97e" stroke="#2f7d4e" stroke-width="0.9"/><path d="M521.5 201.7 l3 3 M535.5 201.7 l-3 3 M521.5 215.7 l3 -2.5 M535.5 215.7 l-3 -2.5" stroke="#3e8f5e" stroke-width="0.9"/><path d="M528.50,222.10 L530.53,226.50 L535.35,227.08 L531.79,230.37 L532.73,235.12 L528.50,232.76 L524.27,235.12 L525.21,230.37 L521.65,227.08 L526.47,226.50 Z" fill="#6cc48c" stroke="#3e8f5e" stroke-width="0.9"/><path d="M532.5 222.5 h3 M533.5 225.0 h3 M533.5 227.5 h2.5" stroke="#3e8f5e" stroke-width="0.8"/><path d="M528.50,241.60 L530.53,246.00 L535.35,246.58 L531.79,249.87 L532.73,254.62 L528.50,252.26 L524.27,254.62 L525.21,249.87 L521.65,246.58 L526.47,246.00 Z" fill="#6cc48c" stroke="#3e8f5e" stroke-width="0.9"/><path d="M532.5 242 h3 M533.5 244.5 h3 M533.5 247 h2.5" stroke="#3e8f5e" stroke-width="0.8"/><path d="M528.50,261.60 L530.53,266.00 L535.35,266.58 L531.79,269.87 L532.73,274.62 L528.50,272.26 L524.27,274.62 L525.21,269.87 L521.65,266.58 L526.47,266.00 Z" fill="#5cb97e" stroke="#2f7d4e" stroke-width="0.9"/><path d="M521.5 261 l3 3 M535.5 261 l-3 3 M521.5 275 l3 -2.5 M535.5 275 l-3 -2.5" stroke="#3e8f5e" stroke-width="0.9"/><path d="M528.50,281.30 L530.53,285.70 L535.35,286.28 L531.79,289.57 L532.73,294.32 L528.50,291.96 L524.27,294.32 L525.21,289.57 L521.65,286.28 L526.47,285.70 Z" fill="#6cc48c" stroke="#3e8f5e" stroke-width="0.9"/><path d="M532.5 281.7 h3 M533.5 284.2 h3 M533.5 286.7 h2.5" stroke="#3e8f5e" stroke-width="0.8"/><path d="M528.50,300.90 L530.53,305.30 L535.35,305.88 L531.79,309.17 L532.73,313.92 L528.50,311.56 L524.27,313.92 L525.21,309.17 L521.65,305.88 L526.47,305.30 Z" fill="#6cc48c" stroke="#3e8f5e" stroke-width="0.9"/><path d="M532.5 301.3 h3 M533.5 303.8 h3 M533.5 306.3 h2.5" stroke="#3e8f5e" stroke-width="0.8"/><path d="M528.50,320.60 L530.53,325.00 L535.35,325.58 L531.79,328.87 L532.73,333.62 L528.50,331.26 L524.27,333.62 L525.21,328.87 L521.65,325.58 L526.47,325.00 Z" fill="#6cc48c" stroke="#3e8f5e" stroke-width="0.9"/><path d="M532.5 321 h3 M533.5 323.5 h3 M533.5 326 h2.5" stroke="#3e8f5e" stroke-width="0.8"/><path d="M528.50,340.60 L530.53,345.00 L535.35,345.58 L531.79,348.87 L532.73,353.62 L528.50,351.26 L524.27,353.62 L525.21,348.87 L521.65,345.58 L526.47,345.00 Z" fill="#6cc48c" stroke="#3e8f5e" stroke-width="0.9"/><path d="M532.5 341 h3 M533.5 343.5 h3 M533.5 346 h2.5" stroke="#3e8f5e" stroke-width="0.8"/><path d="M530.50,381.70 L532.14,385.25 L536.02,385.71 L533.15,388.36 L533.91,392.19 L530.50,390.28 L527.09,392.19 L527.85,388.36 L524.98,385.71 L528.86,385.25 Z" fill="#6cc48c" stroke="#3e8f5e" stroke-width="0.9"/><path d="M521.5 395.5 l4 -4 M523.5 396.0 l3 -3" stroke="#8fcfa5" stroke-width="0.9"/><path d="M530.50,401.50 L532.14,405.05 L536.02,405.51 L533.15,408.16 L533.91,411.99 L530.50,410.08 L527.09,411.99 L527.85,408.16 L524.98,405.51 L528.86,405.05 Z" fill="#6cc48c" stroke="#3e8f5e" stroke-width="0.9"/><path d="M521.5 415.3 l4 -4 M523.5 415.8 l3 -3" stroke="#8fcfa5" stroke-width="0.9"/><path d="M530.50,443.10 L532.14,446.65 L536.02,447.11 L533.15,449.76 L533.91,453.59 L530.50,451.68 L527.09,453.59 L527.85,449.76 L524.98,447.11 L528.86,446.65 Z" fill="#6cc48c" stroke="#3e8f5e" stroke-width="0.9"/><path d="M521.5 456.9 l4 -4 M523.5 457.4 l3 -3" stroke="#8fcfa5" stroke-width="0.9"/><path d="M530.50,462.90 L532.14,466.45 L536.02,466.91 L533.15,469.56 L533.91,473.39 L530.50,471.48 L527.09,473.39 L527.85,469.56 L524.98,466.91 L528.86,466.45 Z" fill="#6cc48c" stroke="#3e8f5e" stroke-width="0.9"/><path d="M521.5 476.7 l4 -4 M523.5 477.2 l3 -3" stroke="#8fcfa5" stroke-width="0.9"/><path d="M530.50,482.80 L532.14,486.35 L536.02,486.81 L533.15,489.46 L533.91,493.29 L530.50,491.38 L527.09,493.29 L527.85,489.46 L524.98,486.81 L528.86,486.35 Z" fill="#6cc48c" stroke="#3e8f5e" stroke-width="0.9"/><path d="M521.5 496.6 l4 -4 M523.5 497.1 l3 -3" stroke="#8fcfa5" stroke-width="0.9"/><path d="M530.50,502.20 L532.14,505.75 L536.02,506.21 L533.15,508.86 L533.91,512.69 L530.50,510.78 L527.09,512.69 L527.85,508.86 L524.98,506.21 L528.86,505.75 Z" fill="#6cc48c" stroke="#3e8f5e" stroke-width="0.9"/><path d="M521.5 516 l4 -4 M523.5 516.5 l3 -3" stroke="#8fcfa5" stroke-width="0.9"/><path d="M528.50,521.10 L530.62,526.19 L536.11,526.63 L531.92,530.21 L533.20,535.57 L528.50,532.70 L523.80,535.57 L525.08,530.21 L520.89,526.63 L526.38,526.19 Z" fill="#6cc48c" stroke="#3e8f5e" stroke-width="0.9"/><path d="M630.50,202.30 L632.53,206.70 L637.35,207.28 L633.79,210.57 L634.73,215.32 L630.50,212.96 L626.27,215.32 L627.21,210.57 L623.65,207.28 L628.47,206.70 Z" fill="#6cc48c" stroke="#3e8f5e" stroke-width="0.9"/><path d="M634.5 202.7 h3 M635.5 205.2 h3 M635.5 207.7 h2.5" stroke="#3e8f5e" stroke-width="0.8"/><path d="M630.50,222.10 L632.53,226.50 L637.35,227.08 L633.79,230.37 L634.73,235.12 L630.50,232.76 L626.27,235.12 L627.21,230.37 L623.65,227.08 L628.47,226.50 Z" fill="#6cc48c" stroke="#3e8f5e" stroke-width="0.9"/><path d="M634.5 222.5 h3 M635.5 225.0 h3 M635.5 227.5 h2.5" stroke="#3e8f5e" stroke-width="0.8"/><path d="M630.50,241.60 L632.53,246.00 L637.35,246.58 L633.79,249.87 L634.73,254.62 L630.50,252.26 L626.27,254.62 L627.21,249.87 L623.65,246.58 L628.47,246.00 Z" fill="#6cc48c" stroke="#3e8f5e" stroke-width="0.9"/><path d="M634.5 242 h3 M635.5 244.5 h3 M635.5 247 h2.5" stroke="#3e8f5e" stroke-width="0.8"/><path d="M632.50,261.20 L634.14,264.75 L638.02,265.21 L635.15,267.86 L635.91,271.69 L632.50,269.78 L629.09,271.69 L629.85,267.86 L626.98,265.21 L630.86,264.75 Z" fill="#6cc48c" stroke="#3e8f5e" stroke-width="0.9"/><path d="M623.5 275 l4 -4 M625.5 275.5 l3 -3" stroke="#8fcfa5" stroke-width="0.9"/><path d="M630.50,281.30 L632.53,285.70 L637.35,286.28 L633.79,289.57 L634.73,294.32 L630.50,291.96 L626.27,294.32 L627.21,289.57 L623.65,286.28 L628.47,285.70 Z" fill="#6cc48c" stroke="#3e8f5e" stroke-width="0.9"/><path d="M634.5 281.7 h3 M635.5 284.2 h3 M635.5 286.7 h2.5" stroke="#3e8f5e" stroke-width="0.8"/><path d="M630.50,300.90 L632.53,305.30 L637.35,305.88 L633.79,309.17 L634.73,313.92 L630.50,311.56 L626.27,313.92 L627.21,309.17 L623.65,305.88 L628.47,305.30 Z" fill="#6cc48c" stroke="#3e8f5e" stroke-width="0.9"/><path d="M634.5 301.3 h3 M635.5 303.8 h3 M635.5 306.3 h2.5" stroke="#3e8f5e" stroke-width="0.8"/><path d="M630.50,320.60 L632.53,325.00 L637.35,325.58 L633.79,328.87 L634.73,333.62 L630.50,331.26 L626.27,333.62 L627.21,328.87 L623.65,325.58 L628.47,325.00 Z" fill="#6cc48c" stroke="#3e8f5e" stroke-width="0.9"/><path d="M634.5 321 h3 M635.5 323.5 h3 M635.5 326 h2.5" stroke="#3e8f5e" stroke-width="0.8"/><path d="M630.50,340.60 L632.53,345.00 L637.35,345.58 L633.79,348.87 L634.73,353.62 L630.50,351.26 L626.27,353.62 L627.21,348.87 L623.65,345.58 L628.47,345.00 Z" fill="#6cc48c" stroke="#3e8f5e" stroke-width="0.9"/><path d="M634.5 341 h3 M635.5 343.5 h3 M635.5 346 h2.5" stroke="#3e8f5e" stroke-width="0.8"/><path d="M630.50,382.10 L632.53,386.50 L637.35,387.08 L633.79,390.37 L634.73,395.12 L630.50,392.76 L626.27,395.12 L627.21,390.37 L623.65,387.08 L628.47,386.50 Z" fill="#5cb97e" stroke="#2f7d4e" stroke-width="0.9"/><path d="M623.5 381.5 l3 3 M637.5 381.5 l-3 3 M623.5 395.5 l3 -2.5 M637.5 395.5 l-3 -2.5" stroke="#3e8f5e" stroke-width="0.9"/><path d="M632.50,401.50 L634.14,405.05 L638.02,405.51 L635.15,408.16 L635.91,411.99 L632.50,410.08 L629.09,411.99 L629.85,408.16 L626.98,405.51 L630.86,405.05 Z" fill="#6cc48c" stroke="#3e8f5e" stroke-width="0.9"/><path d="M623.5 415.3 l4 -4 M625.5 415.8 l3 -3" stroke="#8fcfa5" stroke-width="0.9"/><path d="M632.50,443.10 L634.14,446.65 L638.02,447.11 L635.15,449.76 L635.91,453.59 L632.50,451.68 L629.09,453.59 L629.85,449.76 L626.98,447.11 L630.86,446.65 Z" fill="#6cc48c" stroke="#3e8f5e" stroke-width="0.9"/><path d="M623.5 456.9 l4 -4 M625.5 457.4 l3 -3" stroke="#8fcfa5" stroke-width="0.9"/><path d="M632.50,462.90 L634.14,466.45 L638.02,466.91 L635.15,469.56 L635.91,473.39 L632.50,471.48 L629.09,473.39 L629.85,469.56 L626.98,466.91 L630.86,466.45 Z" fill="#6cc48c" stroke="#3e8f5e" stroke-width="0.9"/><path d="M623.5 476.7 l4 -4 M625.5 477.2 l3 -3" stroke="#8fcfa5" stroke-width="0.9"/><path d="M632.50,482.80 L634.14,486.35 L638.02,486.81 L635.15,489.46 L635.91,493.29 L632.50,491.38 L629.09,493.29 L629.85,489.46 L626.98,486.81 L630.86,486.35 Z" fill="#6cc48c" stroke="#3e8f5e" stroke-width="0.9"/><path d="M623.5 496.6 l4 -4 M625.5 497.1 l3 -3" stroke="#8fcfa5" stroke-width="0.9"/><path d="M632.50,502.20 L634.14,505.75 L638.02,506.21 L635.15,508.86 L635.91,512.69 L632.50,510.78 L629.09,512.69 L629.85,508.86 L626.98,506.21 L630.86,505.75 Z" fill="#6cc48c" stroke="#3e8f5e" stroke-width="0.9"/><path d="M623.5 516 l4 -4 M625.5 516.5 l3 -3" stroke="#8fcfa5" stroke-width="0.9"/></svg>
<div class="a" style="left:517.2px;top:546.4px;width:12.1px;height:12.2px;background:#fff;border:1px solid #333"></div>
<svg class="a" style="left:517.2px;top:546.4px;" width="13" height="13" viewBox="0 0 13 13"><path d="M2.5 6.5 L5 9 L10 3" fill="none" stroke="#222" stroke-width="1.2"/></svg>
<div class="t" style="left:536.20px;top:547.65px;font-family:'Liberation Sans';font-size:11px;line-height:11px;color:#222;font-weight:normal;transform:scaleX(0.9457);">Preview Effect</div>
<div class="a" style="left:536.5px;top:559.5px;width:6px;height:1px;background:#222"></div>
<div class="a" style="left:614.3px;top:546.4px;width:67.5px;height:20.1px;background:#e1e1e1;border:2px solid #0a78d4"></div>
<div class="t" style="left:641.75px;top:551.43px;font-family:'Liberation Sans';font-size:11.5px;line-height:11.5px;color:#222;font-weight:normal;transform:scaleX(0.8120);">OK</div>
<div class="a" style="left:692.8px;top:546.4px;width:68px;height:20.1px;background:#e1e1e1;border:1px solid #adadad"></div>
<div class="t" style="left:710.70px;top:551.43px;font-family:'Liberation Sans';font-size:11.5px;line-height:11.5px;color:#222;font-weight:normal;transform:scaleX(0.8824);">Cancel</div>
<svg class="a" style="left:592px;top:456px;" width="16" height="24" viewBox="0 0 16 24"><path d="M1.5 1.5 V18 L5.5 14 L8.5 21 L11 20 L8 13 H13.5 Z" fill="#fff" stroke="#111" stroke-width="1.1" stroke-linejoin="round"/></svg>
<div class="t" style="left:1087.20px;top:175.90px;font-family:'Liberation Sans';font-size:20px;line-height:20px;color:#3a3a3a;font-weight:normal;transform:scaleX(0.9611);">Animation P...</div>
<svg class="a" style="left:1218px;top:180px;" width="50" height="16" viewBox="0 0 50 16"><path d="M2.5 3.9 L8.75 10.4 L15 3.9" fill="none" stroke="#444" stroke-width="1.3"/><path d="M34.3 2.2 L44 12 M44 2.2 L34.3 12" fill="none" stroke="#444" stroke-width="1.3"/></svg>
<div class="a" style="left:1087.7px;top:206.8px;width:65.9px;height:20.5px;background:#f4f4f4"></div>
<svg class="a" style="left:1087.7px;top:206.8px;" width="20" height="20" viewBox="0 0 20 20"><path d="M7.8 6.5 L11.2 10.3 L7.8 14.1 Z" fill="#d0d0d0" stroke="#c4c4c4" stroke-width="1"/></svg>
<div class="t" style="left:1111.80px;top:210.22px;font-family:'Liberation Sans';font-size:11.5px;line-height:11.5px;color:#b4b4b4;font-weight:normal;transform:scaleX(0.9438);">Play All</div>
<div class="a" style="left:1222px;top:206.8px;width:19.3px;height:20.5px;background:#f2f2f2"></div>
<div class="a" style="left:1246px;top:206.8px;width:19.6px;height:20.5px;background:#f2f2f2"></div>
<svg class="a" style="left:1222px;top:206.8px;" width="44" height="21" viewBox="0 0 44 21"><path d="M5.5 12.5 L9.7 7.5 L13.9 12.5 Z" fill="#c4c4c4"/><path d="M29.5 8.5 L33.8 13.5 L38.1 8.5 Z" fill="#c4c4c4"/></svg>
<div class="t" style="left:6.00px;top:704.02px;font-family:'Liberation Sans';font-size:11.5px;line-height:11.5px;color:#505050;font-weight:normal;transform:scaleX(0.9175);">Slide 3 of 8</div>
<svg class="a" style="left:76px;top:700px;" width="16" height="18" viewBox="0 0 16 18"><path d="M1.5 2.5 h5 l1.5 1.5 l1.5 -1.5 h5 v10 h-5 l-1.5 1.5 l-1.5 -1.5 h-5 z M8 4 v10" fill="none" stroke="#555" stroke-width="1.1"/><path d="M9 13 l2 2 l3 -4" fill="none" stroke="#555" stroke-width="1.1"/></svg>
<div class="t" style="left:106.00px;top:704.02px;font-family:'Liberation Sans';font-size:11.5px;line-height:11.5px;color:#505050;font-weight:normal;transform:scaleX(0.9182);">English (United States)</div>
<svg class="a" style="left:229px;top:699px;" width="16" height="19" viewBox="0 0 16 19"><g fill="none" stroke="#555" stroke-width="1.1"><circle cx="8" cy="3" r="1.8"/><path d="M2 6 h12 M8 6 v6 l-3 5 M8 12 l3 5"/><path d="M9 11 l5 5 M14 11 l-5 5"/></g></svg>
<div class="t" style="left:247.80px;top:704.02px;font-family:'Liberation Sans';font-size:11.5px;line-height:11.5px;color:#505050;font-weight:normal;transform:scaleX(0.9210);">Accessibility: Investigate</div>
<svg class="a" style="left:873px;top:698px;" width="20" height="22" viewBox="0 0 20 22"><g fill="none" stroke="#555" stroke-width="1.1"><path d="M5 6 l4.5 -3.5 l4.5 3.5 M1.5 10.5 h16 M1.5 14.5 h16 M1.5 18.5 h16"/></g></svg>
<div class="t" style="left:892.00px;top:704.02px;font-family:'Liberation Sans';font-size:11.5px;line-height:11.5px;color:#505050;font-weight:normal;transform:scaleX(0.9518);">Notes</div>
<div class="a" style="left:938.7px;top:698px;width:37px;height:22px;background:#dcdcdc"></div>
<svg class="a" style="left:940px;top:698px;" width="140" height="22" viewBox="0 0 140 22"><g fill="none" stroke="#555" stroke-width="1.1">
<rect x="11.5" y="5.5" width="14" height="11"/><rect x="14.5" y="8.5" width="8" height="5"/>
<rect x="48.5" y="5.5" width="5.5" height="4.5"/><rect x="56" y="5.5" width="5.5" height="4.5"/><rect x="48.5" y="12" width="5.5" height="4.5"/><rect x="56" y="12" width="5.5" height="4.5"/>
<path d="M85.5 5.5 h6 l0.5 1 l0.5 -1 h6 v11 h-6 l-0.5 1 l-0.5 -1 h-6 z M92 6.5 v10"/>
<path d="M123.5 5 h11 M124.5 5 v6 h9 v-6 M129 11 v5 M126 16.5 h6"/>
</g></svg>
<div class="a" style="left:1094.4px;top:708.5px;width:8px;height:1.2px;background:#666"></div>
<div class="a" style="left:1106px;top:708.7px;width:93.3px;height:1px;background:#777"></div>
<div class="a" style="left:1135.4px;top:703px;width:4.3px;height:13px;background:#333"></div>
<div class="a" style="left:1152.5px;top:706px;width:1px;height:6px;background:#777"></div>
<svg class="a" style="left:1202px;top:702px;" width="14" height="14" viewBox="0 0 14 14"><path d="M1.5 7 h10 M6.5 2 v10" stroke="#666" stroke-width="1.1"/></svg>
<div class="t" style="left:1224.00px;top:704.02px;font-family:'Liberation Sans';font-size:11.5px;line-height:11.5px;color:#505050;font-weight:normal;transform:scaleX(0.8814);">68%</div>
<svg class="a" style="left:1259px;top:699px;" width="18" height="20" viewBox="0 0 18 20"><g fill="none" stroke="#555" stroke-width="1.1"><rect x="5.5" y="6.5" width="6.5" height="7"/><path d="M8.75 1.5 l-2 2.2 h4 z M8.75 18.5 l-2 -2.2 h4 z M1.5 10 l2.2 -2 v4 z M16 10 l-2.2 -2 v4 z"/></g></svg>
<svg class="a" style="left:0px;top:0px;" width="200" height="720" viewBox="0 0 200 720"><defs><linearGradient id="colg" x1="0" x2="1"><stop offset="0" stop-color="#d9d2bc"/><stop offset="0.5" stop-color="#f6f2e4"/><stop offset="1" stop-color="#d4ccb4"/></linearGradient></defs>
<circle cx="76.5" cy="607.3" r="77" fill="#4371c5"/>
<circle cx="76.5" cy="607.3" r="72.8" fill="none" stroke="#eef3fb" stroke-width="1.6"/>
<path d="M75.2 546.2 L40.7 558.5 H109.8 Z" fill="#f1ecdd"/>
<path d="M42 558.5 H108.5 V561.5 H42Z" fill="#e3dcc6"/>
<rect x="43.5" y="561.5" width="12" height="3" fill="#ece6d3"/><rect x="69.5" y="561.5" width="12" height="3" fill="#ece6d3"/><rect x="95.5" y="561.5" width="12" height="3" fill="#ece6d3"/>
<rect x="46" y="564" width="7.3" height="21" fill="url(#colg)"/>
<rect x="71.8" y="564" width="7.3" height="21" fill="url(#colg)"/>
<rect x="98" y="564" width="6.6" height="21" fill="url(#colg)"/>
<rect x="42.2" y="584.6" width="66.6" height="6.8" fill="#ebe5d1"/>
<rect x="39.2" y="591.4" width="72.5" height="6.8" fill="#f0ebdb"/>
<path d="M39.2 591.6 H111.7" stroke="#cfc6aa" stroke-width="0.7"/>
<text x="0" y="0" font-family="Liberation Sans" font-size="12.5" font-weight="bold" fill="#f2f6fc" text-anchor="middle" transform="translate(48.81,660.72) rotate(29.46)">U</text><text x="0" y="0" font-family="Liberation Sans" font-size="12.5" font-weight="bold" fill="#f2f6fc" text-anchor="middle" transform="translate(56.15,664.19) rotate(21.19)">N</text><text x="0" y="0" font-family="Liberation Sans" font-size="12.5" font-weight="bold" fill="#f2f6fc" text-anchor="middle" transform="translate(61.23,665.89) rotate(15.74)">I</text><text x="0" y="0" font-family="Liberation Sans" font-size="12.5" font-weight="bold" fill="#f2f6fc" text-anchor="middle" transform="translate(66.10,667.03) rotate(10.65)">V</text><text x="0" y="0" font-family="Liberation Sans" font-size="12.5" font-weight="bold" fill="#f2f6fc" text-anchor="middle" transform="translate(73.48,667.92) rotate(3.08)">E</text><text x="0" y="0" font-family="Liberation Sans" font-size="12.5" font-weight="bold" fill="#f2f6fc" text-anchor="middle" transform="translate(81.25,667.80) rotate(-4.84)">R</text><text x="0" y="0" font-family="Liberation Sans" font-size="12.5" font-weight="bold" fill="#f2f6fc" text-anchor="middle" transform="translate(88.93,666.61) rotate(-12.76)">S</text><text x="0" y="0" font-family="Liberation Sans" font-size="12.5" font-weight="bold" fill="#f2f6fc" text-anchor="middle" transform="translate(93.76,665.29) rotate(-17.85)">I</text><text x="0" y="0" font-family="Liberation Sans" font-size="12.5" font-weight="bold" fill="#f2f6fc" text-anchor="middle" transform="translate(98.13,663.68) rotate(-22.59)">T</text><text x="0" y="0" font-family="Liberation Sans" font-size="12.5" font-weight="bold" fill="#f2f6fc" text-anchor="middle" transform="translate(104.48,660.55) rotate(-29.81)">Y</text>
<g stroke="#e8eef8" stroke-width="1" fill="#e8eef8">
<path d="M24 645 L37 657" fill="none"/><ellipse cx="27" cy="646" rx="2.3" ry="1" transform="rotate(-30 27 646)"/><ellipse cx="30" cy="649" rx="2.3" ry="1" transform="rotate(-30 30 649)"/><ellipse cx="27.5" cy="651" rx="2.3" ry="1" transform="rotate(60 27.5 651)"/><ellipse cx="31" cy="653.5" rx="2.3" ry="1" transform="rotate(60 31 653.5)"/>
<path d="M127 645 L114 657" fill="none"/><ellipse cx="124" cy="646" rx="2.3" ry="1" transform="rotate(30 124 646)"/><ellipse cx="121" cy="649" rx="2.3" ry="1" transform="rotate(30 121 649)"/><ellipse cx="123.5" cy="651" rx="2.3" ry="1" transform="rotate(-60 123.5 651)"/><ellipse cx="120" cy="653.5" rx="2.3" ry="1" transform="rotate(-60 120 653.5)"/>
</g></svg>
<div class="t" style="left:10.30px;top:605.50px;font-family:'Liberation Sans';font-size:30px;line-height:30px;color:#f4f8fc;font-weight:normal;transform:scaleX(0.6521);-webkit-text-stroke:0.9px #f4f8fc;">POWERPOINT</div>
<div class="t" style="left:701.00px;top:226.72px;font-family:'Liberation Sans';font-size:17.5px;line-height:17.5px;color:rgba(255,255,255,0.7);font-weight:normal;transform:scaleX(1.0822);text-shadow:0 0 1.5px rgba(0,0,0,0.18);">POWERPOINT UNIVERSITY</div>
</body></html>
